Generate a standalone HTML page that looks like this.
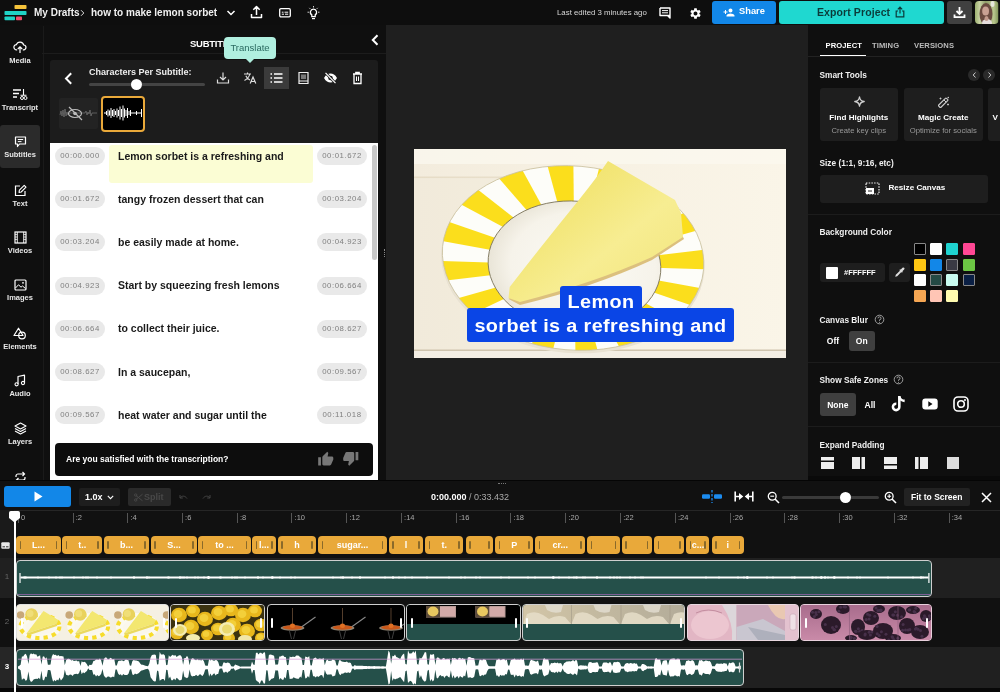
<!DOCTYPE html>
<html>
<head>
<meta charset="utf-8">
<style>
*{box-sizing:border-box;margin:0;padding:0}
html,body{width:1000px;height:692px;overflow:hidden;background:#0f0f0f;font-family:"Liberation Sans",sans-serif;color:#fff}
.abs{position:absolute}
body>div{will-change:transform}
#topbar{position:absolute;left:0;top:0;width:1000px;height:25px;background:#0e0e0e}
#sidebar{position:absolute;left:0;top:26px;width:42px;height:454px;background:#0f0f0f}
.sb{position:absolute;left:0;width:40px;text-align:center;font-size:7.5px;font-weight:700;color:#e8e8e8;letter-spacing:0}
.sb svg{display:block;margin:0 auto 2px auto}
#subpanel{position:absolute;left:42px;top:26px;width:344px;height:454px;background:#0f0f0f}
#subcard{position:absolute;left:50px;top:60px;width:328px;height:84px;background:#1c1c1c;border-radius:3px 3px 0 0}
#sublist{position:absolute;left:50px;top:143px;width:327.500px;height:337px;background:#fff;overflow:hidden}
.pill{position:absolute;width:50px;height:18px;margin-top:.5px;border-radius:9px;background:#e9e9e9;color:#808080;font-size:7.800px;text-align:center;line-height:18px;letter-spacing:.55px}
.row{position:absolute;left:68px;font-size:10.5px;font-weight:700;color:#1a1a1a;white-space:nowrap}
#canvas{position:absolute;left:386px;top:25px;width:422px;height:455px;background:#1f1f1f}
#right{position:absolute;left:808px;top:26px;width:192px;height:454px;background:#0f0f0f}
#timeline{position:absolute;left:0;top:480px;width:1000px;height:212px;background:#111}
.t1{font-size:10px;font-weight:700;color:#f0f0f0;white-space:nowrap}
.cap{font-size:18px;font-weight:700;color:#fff;text-align:center;white-space:nowrap;letter-spacing:.35px;transform:scaleX(1.10);transform-origin:50% 50%}
.tab{font-size:7.6px;font-weight:700;color:#bbb;letter-spacing:.1px}
.lbl{font-size:8.3px;font-weight:700;color:#f0f0f0;white-space:nowrap}
.card{background:#1e1e1e;border-radius:3px}
.ct{font-size:8.1px;font-weight:700;color:#fff;text-align:center;white-space:nowrap}
.cs{font-size:7.700px;color:#999;text-align:center;white-space:nowrap}
.sc{position:absolute;top:55.700px;height:18.300px;background:#e9a93a;border-radius:4px;color:#fff;font-size:9px;font-weight:700;text-align:center;line-height:18.300px;white-space:nowrap;overflow:hidden}
.sc i{position:absolute;top:5.500px;width:1.500px;height:7.500px;background:#8a6a2a;border-radius:1px}
.clip{position:absolute;border:1px solid #cfcfcf;border-radius:4px;overflow:hidden}
.clip svg{filter:blur(.45px)}
.h{position:absolute;width:2px;height:10px;background:#fff;border-radius:1px}
</style>
</head>
<body>
<div id="topbar">
<svg class="abs" style="left:4px;top:4px" width="23" height="17" viewBox="0 0 23 17"><rect x="10.5" y="1" width="12" height="4" rx=".8" fill="#f5c33b"/><rect x="0.5" y="7" width="22" height="4" rx=".8" fill="#1fd3c6"/><rect x="0.5" y="12.5" width="10.5" height="3.800" rx=".8" fill="#1fd3c6"/><rect x="12" y="12.5" width="6" height="3.800" rx=".8" fill="#f0506e"/></svg>
<div class="abs t1" style="left:34px;top:7px">My Drafts</div>
<svg class="abs" style="left:80px;top:9px" width="5" height="8" viewBox="0 0 5 8"><path d="M1 1.2 L3.8 4 L1 6.8" fill="none" stroke="#ddd" stroke-width="1"/></svg>
<div class="abs t1" style="left:91px;top:7px">how to make lemon sorbet</div>
<svg class="abs" style="left:226px;top:9px" width="10" height="8" viewBox="0 0 10 8"><path d="M1.5 2 L5 5.5 L8.5 2" fill="none" stroke="#fff" stroke-width="1.5"/></svg>
<svg class="abs" style="left:250px;top:5px" width="13" height="15" viewBox="0 0 13 15"><path d="M6.5 10 V2 M3.3 4.8 L6.5 1.6 L9.7 4.8 M1.5 9 V12.5 H11.5 V9" fill="none" stroke="#fff" stroke-width="1.5" stroke-linejoin="round"/></svg>
<svg class="abs" style="left:279px;top:8px" width="12" height="9.500" viewBox="0 0 12 9.500"><rect x=".7" y=".7" width="10.600" height="8.100" rx="1.200" fill="none" stroke="#fff" stroke-width="1.300"/><path d="M2.800 6.200 H5 M6 6.200 H9.200 M2.800 4.200 H4.500 M5.500 4.200 H9.200" stroke="#fff" stroke-width="1"/></svg>
<svg class="abs" style="left:307px;top:5.500px" width="13" height="14" viewBox="0 0 13 14"><path d="M6.500 3.200 a3.100 3.100 0 0 1 1.700 5.700 V10.600 H4.800 V8.900 A3.100 3.100 0 0 1 6.500 3.200 Z" fill="none" stroke="#fff" stroke-width="1.300"/><path d="M5 12.600 H8" stroke="#fff" stroke-width="1.200"/><path d="M6.500 .2 V1.400 M2.300 1.900 L3.100 2.700 M10.700 1.900 L9.900 2.700 M.6 6.200 H1.800 M11.200 6.200 H12.400" stroke="#fff" stroke-width="1"/></svg>
<div class="abs" style="left:557px;top:8px;font-size:7.850px;color:#d8d8d8;white-space:nowrap">Last edited 3 minutes ago</div>
<svg class="abs" style="left:659px;top:7px" width="12" height="12" viewBox="0 0 12 12"><path d="M1 1 H11 V8.5 H8.5 L11 11 V8.5 M1 1 V8.5 H8.5" fill="none" stroke="#fff" stroke-width="1.4" stroke-linejoin="round"/><path d="M3 3.6 H9 M3 5.8 H9" stroke="#fff" stroke-width="1"/></svg>
<svg class="abs" style="left:688.500px;top:6.500px" width="13" height="13" viewBox="0 0 24 24"><path fill="#fff" d="M19.14 12.94c.04-.3.06-.61.06-.94 0-.32-.02-.64-.07-.94l2.03-1.58a.49.49 0 0 0 .12-.61l-1.92-3.32a.488.488 0 0 0-.59-.22l-2.39.96c-.5-.38-1.03-.7-1.62-.94l-.36-2.54a.484.484 0 0 0-.48-.41h-3.84c-.24 0-.43.17-.47.41l-.36 2.54c-.59.24-1.13.57-1.62.94l-2.39-.96c-.22-.08-.47 0-.59.22L2.74 8.87c-.12.21-.08.47.12.61l2.03 1.58c-.05.3-.09.63-.09.94s.02.64.07.94l-2.03 1.58a.49.49 0 0 0-.12.61l1.92 3.32c.12.22.37.29.59.22l2.39-.96c.5.38 1.03.7 1.62.94l.36 2.54c.05.24.24.41.48.41h3.84c.24 0 .44-.17.47-.41l.36-2.54c.59-.24 1.13-.56 1.62-.94l2.39.96c.22.08.47 0 .59-.22l1.92-3.32c.12-.22.07-.47-.12-.61l-2.01-1.58zM12 15.6c-1.98 0-3.600-1.62-3.600-3.600s1.62-3.600 3.600-3.600 3.600 1.62 3.600 3.600-1.620 3.600-3.600 3.600z"/></svg>
<div class="abs" style="left:712px;top:1px;width:64px;height:23px;background:#1287e8;border-radius:3px"></div>
<svg class="abs" style="left:723px;top:8px" width="12" height="9" viewBox="0 0 24 18"><path fill="#fff" d="M15 9c2.21 0 4-1.790 4-4s-1.790-4-4-4-4 1.790-4 4 1.790 4 4 4zm-9-2V4H4v3H1v2h3v3h2V9h3V7H6zm9 4c-2.670 0-8 1.340-8 4v2h16v-2c0-2.660-5.330-4-8-4z"/></svg>
<div class="abs" style="left:739px;top:6px;font-size:9.300px;font-weight:700;color:#fff">Share</div>
<div class="abs" style="left:779px;top:1px;width:165px;height:23px;background:#1fd8d0;border-radius:3px"></div>
<div class="abs" style="left:817px;top:6px;font-size:10.5px;font-weight:700;color:#0b3b3a;white-space:nowrap;letter-spacing:.1px">Export Project</div>
<svg class="abs" style="left:895px;top:6px" width="10" height="12" viewBox="0 0 10 12"><path d="M5 7.5 V1.5 M2.8 3.4 L5 1.2 L7.2 3.4 M3 5 H1.2 V10.8 H8.800 V5 H7" fill="none" stroke="#0b3b3a" stroke-width="1.2"/></svg>
<div class="abs" style="left:947px;top:1px;width:24.500px;height:22.500px;background:#404040;border-radius:3px"></div>
<svg class="abs" style="left:953px;top:6px" width="13" height="13" viewBox="0 0 13 13"><path d="M6.5 1 V7.5 M3.500 5 L6.5 8 L9.5 5" fill="none" stroke="#fff" stroke-width="1.800"/><path d="M1.5 8.5 V11.2 H11.5 V8.5" fill="none" stroke="#fff" stroke-width="1.800"/></svg>
<svg class="abs" style="left:975px;top:1px" width="23.500" height="23" viewBox="0 0 23.500 23"><defs><clipPath id="av"><rect width="23.500" height="23" rx="4"/></clipPath><linearGradient id="avg" x1="0" y1="0" x2="1" y2="0"><stop offset="0" stop-color="#9db070"/><stop offset=".2" stop-color="#c9d3a4"/><stop offset=".45" stop-color="#8e9c68"/><stop offset=".8" stop-color="#b9c78e"/><stop offset="1" stop-color="#7f9258"/></linearGradient><filter id="avb"><feGaussianBlur stdDeviation=".7"/></filter></defs><g clip-path="url(#av)"><rect width="23.500" height="23" fill="url(#avg)"/><g filter="url(#avb)"><ellipse cx="11" cy="13" rx="6.500" ry="11" fill="#6b4b40"/><ellipse cx="17.500" cy="3" rx="2" ry="3" fill="#e6e6dc"/><ellipse cx="10.600" cy="10" rx="3.400" ry="4.600" fill="#c9a193"/><ellipse cx="12" cy="22" rx="5" ry="4" fill="#e6dedd"/><ellipse cx="11.500" cy="17.500" rx="2" ry="2.500" fill="#c29a8c"/></g></g></svg>
</div>
</div>
<div id="sidebar">
<div class="abs" style="left:0;top:99px;width:40px;height:43px;background:#2b2b2b;border-radius:3px"></div>
<div class="sb" style="top:14.5px"><svg width="14" height="13" viewBox="0 0 14 13"><path d="M4.200 8.800 H3.600 A2.600 2.600 0 0 1 3.400 3.600 A3.800 3.800 0 0 1 10.700 4 A2.400 2.400 0 0 1 10.400 8.800 H9.800" fill="none" stroke="#fff" stroke-width="1.2"/><path d="M7 12 V6 M4.800 8 L7 5.800 L9.200 8" fill="none" stroke="#fff" stroke-width="1.2"/></svg>Media</div>
<div class="sb" style="top:62.2px"><svg width="16" height="13" viewBox="0 0 16 13"><path d="M1 2 H9 M1 5.500 H7 M1 9 H5" stroke="#fff" stroke-width="1.300"/><path d="M11.500 1 V7 M8.500 7.200 H14.500" stroke="#fff" stroke-width="1.100"/><circle cx="10" cy="10" r="1.500" fill="none" stroke="#fff" stroke-width="1"/><circle cx="13.500" cy="10" r="1.500" fill="none" stroke="#fff" stroke-width="1"/></svg>Transcript</div>
<div class="sb" style="top:109.9px"><svg width="13" height="12" viewBox="0 0 13 12"><path d="M1.500 1 H11.500 V8 H5.500 L3.500 10.500 V8 H1.500 Z" fill="none" stroke="#fff" stroke-width="1.200" stroke-linejoin="round"/><path d="M3.800 3.500 H9.200 M3.800 5.600 H7.500" stroke="#fff" stroke-width="1"/></svg>Subtitles</div>
<div class="sb" style="top:157.6px"><svg width="13" height="13" viewBox="0 0 13 13"><path d="M6 2 H1.500 V11.500 H11 V7" fill="none" stroke="#fff" stroke-width="1.200"/><path d="M5 8.500 L5.400 6.200 L10.200 1.400 L12 3.200 L7.200 8 Z" fill="none" stroke="#fff" stroke-width="1.100" stroke-linejoin="round"/></svg>Text</div>
<div class="sb" style="top:205.3px"><svg width="13" height="13" viewBox="0 0 13 13"><rect x="1" y="1" width="11" height="11" fill="none" stroke="#fff" stroke-width="1.200"/><path d="M3.300 1 V12 M9.700 1 V12" stroke="#fff" stroke-width=".9"/><path d="M1 3.500 H3.300 M1 6 H3.300 M1 8.500 H3.300 M9.700 3.500 H12 M9.700 6 H12 M9.700 8.500 H12" stroke="#fff" stroke-width=".7"/></svg>Videos</div>
<div class="sb" style="top:253.0px"><svg width="13" height="12" viewBox="0 0 13 12"><rect x="1" y="1" width="11" height="10" rx="1" fill="none" stroke="#fff" stroke-width="1.200"/><path d="M1.500 9 L4.500 5.800 L7 8.200 L8.500 7 L11.500 9.500" fill="none" stroke="#fff" stroke-width="1"/><circle cx="9" cy="3.800" r=".9" fill="#fff"/></svg>Images</div>
<div class="sb" style="top:300.7px"><svg width="14" height="13" viewBox="0 0 14 13"><path d="M5.500 1.200 L10 8.500 H1 Z" fill="none" stroke="#fff" stroke-width="1.200" stroke-linejoin="round"/><circle cx="9" cy="8.500" r="3.300" fill="none" stroke="#fff" stroke-width="1.200"/></svg>Elements</div>
<div class="sb" style="top:348.4px"><svg width="12" height="13" viewBox="0 0 12 13"><path d="M4 10 V2.500 L10.500 1.200 V8.800" fill="none" stroke="#fff" stroke-width="1.200" stroke-linejoin="round"/><circle cx="2.600" cy="10.300" r="1.600" fill="none" stroke="#fff" stroke-width="1.100"/><circle cx="9" cy="9" r="1.600" fill="none" stroke="#fff" stroke-width="1.100"/></svg>Audio</div>
<div class="sb" style="top:396.1px"><svg width="13" height="13" viewBox="0 0 13 13"><path d="M6.500 1 L12 4 L6.500 7 L1 4 Z" fill="none" stroke="#fff" stroke-width="1.100" stroke-linejoin="round"/><path d="M1 6.500 L6.500 9.500 L12 6.500 M1 9 L6.500 12 L12 9" fill="none" stroke="#fff" stroke-width="1.100" stroke-linejoin="round"/></svg>Layers</div>
<div class="sb" style="top:445.0px"><svg width="13" height="12" viewBox="0 0 13 12"><path d="M2 6 V5 A2 2 0 0 1 4 3 H10 M8.500 1 L10.500 3 L8.500 5 M11 6 V7 A2 2 0 0 1 9 9 H3 M4.500 7 L2.500 9 L4.500 11" fill="none" stroke="#fff" stroke-width="1.200"/></svg></div>
</div>
<div id="subpanel">
<div class="abs" style="left:.5px;top:0;width:1px;height:454px;background:#1a1a1a"></div>
<div class="abs" style="left:148px;top:12px;font-size:9.500px;font-weight:700;color:#fff;letter-spacing:-.25px">SUBTITLES</div>
<svg class="abs" style="left:328.500px;top:7.500px" width="8" height="12" viewBox="0 0 8 12"><path d="M6.500 1.200 L1.800 6 L6.500 10.800" fill="none" stroke="#fff" stroke-width="2"/></svg>
<div class="abs" style="left:0;top:27px;width:344px;height:1px;background:#1c1c1c"></div>
</div>
<div id="subcard">
<svg class="abs" style="left:14px;top:12px" width="9" height="13" viewBox="0 0 9 13"><path d="M7.200 1.200 L2 6.500 L7.200 11.800" fill="none" stroke="#fff" stroke-width="2"/></svg>
<div class="abs" style="left:39px;top:7px;font-size:9px;font-weight:700;color:#eee;white-space:nowrap">Characters Per Subtitle:</div>
<div class="abs" style="left:39px;top:23px;width:116px;height:3px;border-radius:2px;background:#444"></div>
<div class="abs" style="left:81px;top:19px;width:11px;height:11px;border-radius:6px;background:#fff"></div>
<!-- icons -->
<svg class="abs" style="left:166px;top:11px" width="14" height="14" viewBox="0 0 14 14"><path d="M7 1.500 V8.500 M4 6 L7 9 L10 6" fill="none" stroke="#ddd" stroke-width="1.200"/><path d="M1.500 8.500 V12 H12.500 V8.500" fill="none" stroke="#ddd" stroke-width="1.200"/></svg>
<svg class="abs" style="left:193px;top:11px" width="14" height="14" viewBox="0 0 14 14"><path d="M1 3 H8 M4.500 1.500 V3 M6.800 3 C6.300 5.500 4.500 7.800 1.500 9.500 M2.800 4.800 C3.500 6.500 5 8 7 9" fill="none" stroke="#ddd" stroke-width="1.100"/><path d="M7.200 12.500 L10 6 L12.800 12.500 M8.200 10.500 H11.800" fill="none" stroke="#ddd" stroke-width="1.200"/></svg>
<div class="abs" style="left:214px;top:7px;width:25px;height:22px;background:#3b3b3b"></div>
<svg class="abs" style="left:220px;top:12px" width="13" height="12" viewBox="0 0 13 12"><path d="M4 2 H12.500 M4 6 H12.500 M4 10 H12.500" stroke="#fff" stroke-width="1.300"/><path d="M.5 2 H2 M.5 6 H2 M.5 10 H2" stroke="#fff" stroke-width="1.500"/></svg>
<svg class="abs" style="left:247px;top:11px" width="13" height="14" viewBox="0 0 13 14"><path d="M2 1.500 H11 V12.500 H2 Z M2 10 H11" fill="none" stroke="#eee" stroke-width="1.200"/><rect x="4" y="3.500" width="5" height="4.500" fill="#777"/></svg>
<svg class="abs" style="left:273px;top:12px" width="15" height="12" viewBox="0 0 15 12"><path d="M1 6 C3 2.500 5 1.500 7.500 1.500 S12 2.500 14 6 C12 9.500 10 10.500 7.500 10.500 S3 9.500 1 6 Z" fill="#fff"/><circle cx="7.500" cy="6" r="2.300" fill="#1c1c1c"/><path d="M2.500 .8 L12.500 11.200" stroke="#1c1c1c" stroke-width="2.600"/><path d="M2.500 .8 L12.500 11.200" stroke="#fff" stroke-width="1.200"/></svg>
<svg class="abs" style="left:302px;top:11px" width="11" height="14" viewBox="0 0 11 14"><path d="M1 3 H10 M3.800 3 V1.500 H7.200 V3 M2 3 V12.500 H9 V3" fill="none" stroke="#fff" stroke-width="1.300"/><path d="M4.500 5.500 V10 M6.500 5.500 V10" stroke="#fff" stroke-width="1"/></svg>
<!-- thumbs -->
<div class="abs" style="left:9px;top:38px;width:39px;height:31px;background:#232323;border-radius:2px"></div>
<svg class="abs" style="left:9px;top:38px" width="39" height="31" viewBox="0 0 39 31"><path d="M1 17 L2 13 L3 18 L4 12 L5 19 L6 11 L7 18 L8 14 L9 17 L10 15 H26 L27 13 L28 17 L29 14 L30 16 L31 12 L32 18 L33 15 H38" fill="none" stroke="#777" stroke-width=".7"/><ellipse cx="16" cy="15.500" rx="6.500" ry="4" fill="none" stroke="#bbb" stroke-width="1.200"/><circle cx="16" cy="15.500" r="1.800" fill="#bbb"/><path d="M10 9 L23 22" stroke="#bbb" stroke-width="1.200"/></svg>
<div class="abs" style="left:51px;top:36px;width:44px;height:36px;background:#000;border:2px solid #eaa93a;border-radius:4px"></div>
<svg class="abs" style="left:53px;top:38px" width="40" height="32" viewBox="0 0 40 32"><path d="M1 15 H3 M3.500 13 V17 M5 11.500 V18.500 M6.500 12.500 V17.500 M8 10 V20 M9.500 12 V18 M11 11 V19 M12.500 13 V17 M14 10.500 V19.500 M15.500 12 V18 M17 8.500 V21.500 M18.500 11 V19 M20 7.500 V22.500 M21.500 10.500 V19.500 M23 12 V18 M24.500 10 V20 M26 13 V17 M27.500 12 V18 M29 14 V16 M30 15 H33 M33.500 13 V17 M35 14 V16 M36 15 H38 M38.500 11 V19" stroke="#fff" stroke-width="1"/></svg>
</div>
<div id="sublist">
<div class="abs" style="left:59px;top:2px;width:203.500px;height:37.500px;background:#fbfdd4;border-radius:3px"></div>
<div class="pill" style="left:5px;top:3.5px">00:00.000</div><div class="row" style="top:6.5px">Lemon sorbet is a refreshing and</div><div class="pill" style="left:267px;top:3.5px">00:01.672</div>
<div class="pill" style="left:5px;top:46.7px">00:01.672</div><div class="row" style="top:49.7px">tangy frozen dessert that can</div><div class="pill" style="left:267px;top:46.7px">00:03.204</div>
<div class="pill" style="left:5px;top:89.9px">00:03.204</div><div class="row" style="top:92.9px">be easily made at home.</div><div class="pill" style="left:267px;top:89.9px">00:04.923</div>
<div class="pill" style="left:5px;top:133.1px">00:04.923</div><div class="row" style="top:136.1px">Start by squeezing fresh lemons</div><div class="pill" style="left:267px;top:133.1px">00:06.664</div>
<div class="pill" style="left:5px;top:176.3px">00:06.664</div><div class="row" style="top:179.3px">to collect their juice.</div><div class="pill" style="left:267px;top:176.3px">00:08.627</div>
<div class="pill" style="left:5px;top:219.5px">00:08.627</div><div class="row" style="top:222.5px">In a saucepan,</div><div class="pill" style="left:267px;top:219.5px">00:09.567</div>
<div class="pill" style="left:5px;top:262.7px">00:09.567</div><div class="row" style="top:265.7px">heat water and sugar until the</div><div class="pill" style="left:267px;top:262.7px">00:11.018</div>

<div class="abs" style="left:322px;top:2px;width:5px;height:115px;border-radius:3px;background:#c8c8c8"></div>
<div class="abs" style="left:4.500px;top:300px;width:318px;height:32.500px;background:#0d0d0d;border-radius:4px"></div>
<div class="abs" style="left:16px;top:311px;font-size:8.500px;font-weight:700;color:#fff;white-space:nowrap">Are you satisfied with the transcription?</div>
<svg class="abs" style="left:267px;top:308px" width="17.500" height="16.500" viewBox="0 0 24 24"><path fill="#777" d="M1 21h4V9H1v12zm22-11c0-1.100-.9-2-2-2h-6.310l.95-4.570.03-.32c0-.41-.17-.79-.44-1.060L14.170 1 7.590 7.590C7.220 7.950 7 8.450 7 9v10c0 1.100.9 2 2 2h9c.83 0 1.540-.5 1.840-1.220l3.020-7.050c.09-.23.140-.47.140-.73v-2z"/></svg>
<svg class="abs" style="left:292px;top:307px" width="17.500" height="16.500" viewBox="0 0 24 24"><path fill="#777" d="M15 3H6c-.83 0-1.540.5-1.840 1.220l-3.020 7.050c-.09.230-.14.470-.14.730v2c0 1.100.9 2 2 2h6.310l-.95 4.570-.03.320c0 .41.170.79.440 1.060L9.830 23l6.590-6.590c.36-.36.580-.86.580-1.410V5c0-1.100-.9-2-2-2zm4 0v12h4V3h-4z"/></svg>
</div>
<!-- tooltip -->
<div class="abs" style="left:224px;top:37px;width:52px;height:22px;background:#b0efdf;border-radius:4px;color:#2a6a60;font-size:9.5px;text-align:center;line-height:22px">Translate</div>
<div class="abs" style="left:246px;top:59px;width:0;height:0;border-left:4px solid transparent;border-right:4px solid transparent;border-top:4px solid #b0efdf"></div>
<div id="canvas">
<div class="abs" style="left:-2px;top:224px;width:2px;height:8px;border-left:1px dotted #888"></div>
<div id="video" class="abs" style="left:28px;top:123.600px;width:372px;height:209px;overflow:hidden;background:#f5efe3">
<svg class="abs" style="left:0;top:0" width="372" height="209" viewBox="0 0 372 209">
<defs>
<clipPath id="rim"><ellipse cx="159" cy="109" rx="131" ry="92"/></clipPath>
<linearGradient id="tbl" x1="0" y1="0" x2="1" y2="0"><stop offset="0" stop-color="#f3ecdd"/><stop offset=".5" stop-color="#f7f1e3"/><stop offset="1" stop-color="#faf5e8"/></linearGradient><linearGradient id="tb2" x1="0" y1="0" x2="1" y2="0"><stop offset="0" stop-color="#e6dcc6"/><stop offset=".3" stop-color="#e9e0cc"/><stop offset=".6" stop-color="#f3ecdd" stop-opacity="0"/></linearGradient>
<linearGradient id="cake" x1="0" y1="0" x2="1" y2="1"><stop offset="0" stop-color="#ecdc62"/><stop offset=".35" stop-color="#f3e678"/><stop offset=".6" stop-color="#f7ed92"/><stop offset="1" stop-color="#f2e47a"/></linearGradient>
<radialGradient id="well" cx=".55" cy=".5" r=".6"><stop offset="0" stop-color="#fbfaf5"/><stop offset=".7" stop-color="#f6f3ea"/><stop offset="1" stop-color="#e4dfd0"/></radialGradient>
<filter id="bl"><feGaussianBlur stdDeviation=".6"/></filter>
</defs>
<rect width="372" height="209" fill="url(#tbl)"/><rect width="372" height="15" fill="#fbf8ef" opacity=".75"/><rect y="27.500" width="372" height="1.600" fill="url(#tb2)"/><rect y="29" width="140" height="180" fill="#efe7d6" opacity=".35"/>
<rect x="0" y="202" width="372" height="7" fill="#f3eee4"/>
<rect x="0" y="200.500" width="372" height="1.500" fill="#cfc4ae"/>
<g filter="url(#bl)">
<g transform="rotate(5 159 110)">
<ellipse cx="159" cy="112" rx="132" ry="92" fill="#e9e2d2"/>
<ellipse cx="159" cy="109" rx="131" ry="92" fill="#fdfdf9"/>
<g clip-path="url(#rim)" fill="#fbde1c"><path d="M161.0 116.0 L80.8 -102.2 L138.8 -109.8 Z"/><path d="M161.0 116.0 L197.6 -108.7 L254.9 -99.0 Z"/><path d="M161.0 116.0 L308.7 -81.1 L356.8 -55.5 Z"/><path d="M161.0 116.0 L397.4 -23.4 L428.9 14.1 Z"/><path d="M161.0 116.0 L450.1 55.5 L460.2 99.2 Z"/><path d="M161.0 116.0 L458.8 143.6 L445.9 186.9 Z"/><path d="M161.0 116.0 L422.1 227.5 L388.3 263.8 Z"/><path d="M161.0 116.0 L345.7 294.4 L296.0 318.2 Z"/><path d="M161.0 116.0 L241.2 334.2 L183.2 341.8 Z"/><path d="M161.0 116.0 L124.4 340.7 L67.1 331.0 Z"/><path d="M161.0 116.0 L13.3 313.1 L-34.8 287.5 Z"/><path d="M161.0 116.0 L-75.4 255.4 L-106.9 217.9 Z"/><path d="M161.0 116.0 L-128.1 176.5 L-138.2 132.8 Z"/><path d="M161.0 116.0 L-136.8 88.4 L-123.9 45.1 Z"/><path d="M161.0 116.0 L-100.1 4.5 L-66.3 -31.8 Z"/><path d="M161.0 116.0 L-23.7 -62.4 L26.0 -86.2 Z"/></g>
<ellipse cx="161" cy="116" rx="86.5" ry="64" fill="url(#well)" stroke="#7d765c" stroke-width=".9"/>
<ellipse cx="159" cy="109" rx="131" ry="92" fill="none" stroke="#c9bf9c" stroke-width=".8"/>
</g>
<path d="M94.500 150 L106 156 Q180 138 238 111 L270 90 L268 86 L100 146 Z" fill="#dcc07e"/>
<path d="M194 12 L261 51 L267 64 L269 88 L238 108 Q180 134 106 153 L94.500 149 L95.700 138 Q125 100 164 52 Q180 32 187 22 Z" fill="url(#cake)"/>
</g>
</svg>
<div class="abs" style="left:145.500px;top:137px;width:82px;height:27px;background:#0a45e6;border-radius:3px"></div>
<div class="abs" style="left:52.500px;top:159.500px;width:267px;height:34px;background:#0a45e6;border-radius:3px"></div>
<div class="abs cap" id="cap1" style="left:145.500px;top:143.500px;width:82px">Lemon</div>
<div class="abs cap" id="cap2" style="left:52.500px;top:167px;width:267px">sorbet is a refreshing and</div>
</div>
</div>
<div id="right">
<div class="abs tab" style="left:17.500px;top:15px;color:#fff">PROJECT</div>
<div class="abs tab" style="left:64px;top:15px">TIMING</div>
<div class="abs tab" style="left:106px;top:15px">VERSIONS</div>
<div class="abs" style="left:11.500px;top:28.500px;width:46.500px;height:2.500px;background:#fff"></div>
<div class="abs" style="left:0;top:30px;width:192px;height:1px;background:#222"></div>
<div class="abs lbl" style="left:11.500px;top:44px">Smart Tools</div>
<div class="abs" style="left:160px;top:42.500px;width:12px;height:12px;border-radius:6px;background:#2a2a2a"></div>
<div class="abs" style="left:175px;top:42.500px;width:12px;height:12px;border-radius:6px;background:#2a2a2a"></div>
<svg class="abs" style="left:163.500px;top:45.500px" width="5" height="6" viewBox="0 0 5 6"><path d="M3.500 .5 L1.200 3 L3.500 5.500" fill="none" stroke="#ccc" stroke-width="1"/></svg>
<svg class="abs" style="left:178.500px;top:45.500px" width="5" height="6" viewBox="0 0 5 6"><path d="M1.500 .5 L3.800 3 L1.500 5.500" fill="none" stroke="#ccc" stroke-width="1"/></svg>
<div class="abs card" style="left:11.500px;top:62px;width:78.500px;height:53px"></div>
<div class="abs card" style="left:96px;top:62px;width:78.500px;height:53px"></div>
<div class="abs card" style="left:180px;top:62px;width:12px;height:53px;border-radius:3px 0 0 3px"></div>
<svg class="abs" style="left:45.500px;top:70px" width="11" height="11" viewBox="0 0 11 11"><path d="M5.500 .8 C5.800 3.800 7.200 5.200 10.200 5.500 C7.200 5.800 5.800 7.200 5.500 10.200 C5.200 7.200 3.800 5.800 .8 5.500 C3.800 5.200 5.200 3.800 5.500 .8 Z" fill="none" stroke="#cfcfcf" stroke-width="1.300" stroke-linejoin="round"/></svg>
<svg class="abs" style="left:130px;top:69.500px" width="12" height="12" viewBox="0 0 12 12"><rect x="-1.600" y="-5.500" width="3.200" height="11" rx=".8" transform="translate(5.200 6.800) rotate(45)" fill="none" stroke="#cfcfcf" stroke-width="1.100"/><path d="M5.800 3.800 L8.200 6.200" stroke="#cfcfcf" stroke-width="1"/><path d="M2.500 1.500 V3.500 M1.500 2.500 H3.500 M10 7.500 V9.500 M9 8.500 H11 M10.300 .8 V2.200 M9.600 1.500 H11" stroke="#cfcfcf" stroke-width=".8"/></svg>
<div class="abs ct" style="left:11.500px;top:87px;width:78.500px">Find Highlights</div>
<div class="abs cs" style="left:11.500px;top:99.500px;width:78.500px">Create key clips</div>
<div class="abs ct" style="left:96px;top:87px;width:78.500px">Magic Create</div>
<div class="abs cs" style="left:96px;top:99.500px;width:78.500px">Optimize for socials</div>
<div class="abs ct" style="left:184.500px;top:87px">V</div>
<div class="abs lbl" style="left:11.500px;top:131.500px">Size (1:1, 9:16, etc)</div>
<div class="abs card" style="left:11.500px;top:149px;width:168.500px;height:28px"></div>
<svg class="abs" style="left:56.500px;top:156px" width="15" height="13" viewBox="0 0 15 13"><rect x="1" y="1" width="13" height="11" fill="none" stroke="#eee" stroke-width="1.200" stroke-dasharray="1.500 1.200"/><rect x="1" y="6" width="8" height="6" fill="#fff"/><path d="M3 9 H7" stroke="#222" stroke-width="1"/></svg>
<div class="abs ct" style="left:80.500px;top:157px;text-align:left">Resize Canvas</div>
<div class="abs" style="left:0;top:188px;width:192px;height:1px;background:#1c1c1c"></div>
<div class="abs lbl" style="left:11.500px;top:201px">Background Color</div>
<div class="abs card" style="left:11.500px;top:236.500px;width:65.500px;height:19.500px"></div>
<div class="abs" style="left:17.500px;top:240.500px;width:12px;height:12px;background:#fff;border-radius:1px"></div>
<div class="abs ct" style="left:36px;top:241.500px;text-align:left;font-size:7.500px">#FFFFFF</div>
<div class="abs card" style="left:81px;top:236.500px;width:20.500px;height:19.500px"></div>
<svg class="abs" style="left:86px;top:241px" width="11" height="11" viewBox="0 0 11 11"><path d="M1.200 9.800 L1.800 7.800 L6.200 3.400 L7.600 4.800 L3.200 9.200 Z" fill="#ddd"/><path d="M5.800 2.600 L8.400 5.200" stroke="#ddd" stroke-width="1.300"/><path d="M7 4 L9.300 1.700" stroke="#ddd" stroke-width="2.400" stroke-linecap="round"/></svg>
<div class="abs" style="left:105.5px;top:217.0px;width:12px;height:12px;background:#000000;border:1px solid #888;border-radius:1px"></div><div class="abs" style="left:121.8px;top:217.0px;width:12px;height:12px;background:#ffffff;border:1px solid #ffffff;border-radius:1px"></div><div class="abs" style="left:138.2px;top:217.0px;width:12px;height:12px;background:#1fd3d0;border:1px solid #1fd3d0;border-radius:1px"></div><div class="abs" style="left:154.6px;top:217.0px;width:12px;height:12px;background:#ff4794;border:1px solid #ff4794;border-radius:1px"></div><div class="abs" style="left:105.5px;top:232.7px;width:12px;height:12px;background:#ffc713;border:1px solid #ffc713;border-radius:1px"></div><div class="abs" style="left:121.8px;top:232.7px;width:12px;height:12px;background:#1287e8;border:1px solid #1287e8;border-radius:1px"></div><div class="abs" style="left:138.2px;top:232.7px;width:12px;height:12px;background:#3a3a44;border:1px solid #888;border-radius:1px"></div><div class="abs" style="left:154.6px;top:232.7px;width:12px;height:12px;background:#6cc644;border:1px solid #6cc644;border-radius:1px"></div><div class="abs" style="left:105.5px;top:248.4px;width:12px;height:12px;background:#ffffff;border:1px solid #ffffff;border-radius:1px"></div><div class="abs" style="left:121.8px;top:248.4px;width:12px;height:12px;background:#244a45;border:1px solid #888;border-radius:1px"></div><div class="abs" style="left:138.2px;top:248.4px;width:12px;height:12px;background:#c9fbf0;border:1px solid #c9fbf0;border-radius:1px"></div><div class="abs" style="left:154.6px;top:248.4px;width:12px;height:12px;background:#0a1f44;border:1px solid #888;border-radius:1px"></div><div class="abs" style="left:105.5px;top:264.1px;width:12px;height:12px;background:#f5a653;border:1px solid #f5a653;border-radius:1px"></div><div class="abs" style="left:121.8px;top:264.1px;width:12px;height:12px;background:#ffc5b5;border:1px solid #ffc5b5;border-radius:1px"></div><div class="abs" style="left:138.2px;top:264.1px;width:12px;height:12px;background:#fffbb0;border:1px solid #fffbb0;border-radius:1px"></div>
<div class="abs lbl" style="left:11.500px;top:288.500px">Canvas Blur</div>
<svg class="abs" style="left:66px;top:288px" width="11" height="11" viewBox="0 0 11 11"><circle cx="5.500" cy="5.500" r="4.300" fill="none" stroke="#aaa" stroke-width=".9"/><path d="M4 4.300 A1.500 1.500 0 1 1 5.500 5.800 V6.800" fill="none" stroke="#aaa" stroke-width=".9"/><circle cx="5.500" cy="8.200" r=".55" fill="#aaa"/></svg>
<div class="abs ct" style="left:17px;top:310px;width:16px;font-size:8.500px">Off</div>
<div class="abs" style="left:40.500px;top:304.500px;width:26.500px;height:20px;background:#3f3f3f;border-radius:3px"></div>
<div class="abs ct" style="left:40.500px;top:310px;width:26.500px;font-size:8.500px">On</div>
<div class="abs" style="left:0;top:335.500px;width:192px;height:1px;background:#1c1c1c"></div>
<div class="abs lbl" style="left:11.500px;top:349px">Show Safe Zones</div>
<svg class="abs" style="left:85px;top:348px" width="11" height="11" viewBox="0 0 11 11"><circle cx="5.500" cy="5.500" r="4.300" fill="none" stroke="#aaa" stroke-width=".9"/><path d="M4 4.300 A1.500 1.500 0 1 1 5.500 5.800 V6.800" fill="none" stroke="#aaa" stroke-width=".9"/><circle cx="5.500" cy="8.200" r=".55" fill="#aaa"/></svg>
<div class="abs" style="left:11.500px;top:366.500px;width:36.500px;height:23px;background:#3f3f3f;border-radius:3px"></div>
<div class="abs ct" style="left:11.500px;top:373.500px;width:36.500px;font-size:8.500px">None</div>
<div class="abs ct" style="left:53px;top:373.500px;width:18px;font-size:8.500px">All</div>
<svg class="abs" style="left:83px;top:368.500px" width="16" height="18.100" viewBox="0 0 15 17"><path d="M7.800 1 V11.200 A3 3 0 1 1 5 8.200" fill="none" stroke="#fff" stroke-width="2.400"/><path d="M7.800 1.500 C8.200 4 10 5.300 12.800 5.500" fill="none" stroke="#fff" stroke-width="2.400"/></svg>
<svg class="abs" style="left:114px;top:372px" width="16" height="12" viewBox="0 0 16 12"><rect x=".3" y=".5" width="15.400" height="11" rx="3" fill="#fff"/><path d="M6.300 3.300 L10.500 6 L6.300 8.700 Z" fill="#0f0f0f"/></svg>
<svg class="abs" style="left:145px;top:370px" width="16" height="16" viewBox="0 0 16 16"><rect x="1" y="1" width="14" height="14" rx="4" fill="none" stroke="#fff" stroke-width="1.600"/><circle cx="8" cy="8" r="3.300" fill="none" stroke="#fff" stroke-width="1.600"/><circle cx="12" cy="4" r="1" fill="#fff"/></svg>
<div class="abs" style="left:0;top:399.500px;width:192px;height:1px;background:#1c1c1c"></div>
<div class="abs lbl" style="left:11.500px;top:414px">Expand Padding</div>
<svg class="abs" style="left:12.500px;top:431px" width="13" height="12" viewBox="0 0 13 12"><rect width="13" height="3.500" fill="#eee"/><rect y="5" width="13" height="7" fill="#eee"/></svg>
<svg class="abs" style="left:44px;top:431px" width="13" height="12" viewBox="0 0 13 12"><rect width="8" height="12" fill="#eee"/><rect x="9.500" width="3.500" height="12" fill="#eee"/></svg>
<svg class="abs" style="left:75.500px;top:431px" width="13" height="12" viewBox="0 0 13 12"><rect width="13" height="7" fill="#eee"/><rect y="8.500" width="13" height="3.500" fill="#eee"/></svg>
<svg class="abs" style="left:106.500px;top:431px" width="13" height="12" viewBox="0 0 13 12"><rect width="3.500" height="12" fill="#eee"/><rect x="5" width="8" height="12" fill="#eee"/></svg>
<svg class="abs" style="left:138.500px;top:431px" width="12" height="12" viewBox="0 0 12 12"><rect width="12" height="12" fill="#ddd"/></svg>
<div class="abs" style="left:0;top:450px;width:192px;height:4px;background:#0a0a0a"></div>
</div>
<div id="timeline">
<!--TL1-->
<div class="abs" style="left:0;top:0;width:1000px;height:1px;background:#050505"></div>
<div class="abs" style="left:497.500px;top:2.500px;width:8px;height:1px;border-top:1px dotted #777"></div>
<div class="abs" style="left:4px;top:6px;width:67px;height:21px;background:#1287e8;border-radius:3px"></div>
<svg class="abs" style="left:34px;top:11px" width="9" height="11" viewBox="0 0 9 11"><path d="M.5 .5 L8.500 5.500 L.5 10.500 Z" fill="#fff"/></svg>
<div class="abs" style="left:79px;top:8px;width:41px;height:18px;background:#1e1e1e;border-radius:2px"></div>
<div class="abs" style="left:85px;top:12px;font-size:9px;font-weight:700;color:#fff">1.0x</div>
<svg class="abs" style="left:107px;top:14.500px" width="7" height="5" viewBox="0 0 7 5"><path d="M.8 .8 L3.500 3.600 L6.200 .8" fill="none" stroke="#fff" stroke-width="1.100"/></svg>
<div class="abs" style="left:128px;top:8px;width:42.500px;height:18px;background:#2a2a2a;border-radius:2px"></div>
<svg class="abs" style="left:133.500px;top:12.500px" width="9" height="9" viewBox="0 0 9 9"><path d="M1.800 2.400 L8.500 7.800 M1.800 6.600 L8.500 1.200" stroke="#484848" stroke-width="1"/><circle cx="1.700" cy="2" r="1.200" fill="none" stroke="#484848" stroke-width=".9"/><circle cx="1.700" cy="7" r="1.200" fill="none" stroke="#484848" stroke-width=".9"/></svg>
<div class="abs" style="left:144px;top:12px;font-size:9px;font-weight:700;color:#484848;white-space:nowrap">Split</div>
<svg class="abs" style="left:179px;top:14px" width="9" height="6" viewBox="0 0 9 6"><path d="M1 1 V4 H3.800 M1.200 3.800 C3 1.500 6 1.500 8 4.500" fill="none" stroke="#444" stroke-width="1"/></svg>
<svg class="abs" style="left:202px;top:14px" width="9" height="6" viewBox="0 0 9 6"><path d="M8 1 V4 H5.200 M7.800 3.800 C6 1.500 3 1.500 1 4.500" fill="none" stroke="#444" stroke-width="1"/></svg>
<div class="abs" style="left:431px;top:12px;font-size:9px;color:#aaa;white-space:nowrap"><b style="color:#fff">0:00.000</b> / 0:33.432</div>
<svg class="abs" style="left:702px;top:10px" width="20" height="13" viewBox="0 0 20 13"><rect x="0" y="4.300" width="8" height="4.400" rx="1.200" fill="#1c8cf0"/><rect x="12" y="4.300" width="8" height="4.400" rx="1.200" fill="#1c8cf0"/><path d="M10 0 V13" stroke="#1c8cf0" stroke-width="1.300" stroke-dasharray="2.500 1.500"/></svg>
<svg class="abs" style="left:734px;top:11px" width="20" height="11" viewBox="0 0 20 11"><path d="M1.200 .5 V10.500 M18.800 .5 V10.500" stroke="#fff" stroke-width="1.600"/><path d="M2 5.500 H6 M18 5.500 H14" stroke="#fff" stroke-width="1.400"/><path d="M5 2 L9.300 5.500 L5 9 Z M15 2 L10.700 5.500 L15 9 Z" fill="#fff"/></svg>
<svg class="abs" style="left:767px;top:10.500px" width="13" height="13" viewBox="0 0 13 13"><circle cx="5.200" cy="5.200" r="3.900" fill="none" stroke="#fff" stroke-width="1.300"/><path d="M8 8 L12 12" stroke="#fff" stroke-width="1.600"/><path d="M3.300 5.200 H7.100" stroke="#fff" stroke-width="1.100"/></svg>
<div class="abs" style="left:782px;top:15.500px;width:97px;height:3px;border-radius:2px;background:#3a3a3a"></div>
<div class="abs" style="left:839.500px;top:11.500px;width:11px;height:11px;border-radius:6px;background:#fff"></div>
<svg class="abs" style="left:884px;top:10.500px" width="13" height="13" viewBox="0 0 13 13"><circle cx="5.200" cy="5.200" r="3.900" fill="none" stroke="#fff" stroke-width="1.300"/><path d="M8 8 L12 12" stroke="#fff" stroke-width="1.600"/><path d="M3.300 5.200 H7.100 M5.200 3.300 V7.100" stroke="#fff" stroke-width="1.100"/></svg>
<div class="abs" style="left:904px;top:8px;width:65.500px;height:18px;background:#222;border-radius:2px;font-size:8.500px;color:#fff;text-align:center;line-height:18px;font-weight:700;white-space:nowrap">Fit to Screen</div>
<svg class="abs" style="left:981px;top:11.500px" width="11" height="11" viewBox="0 0 11 11"><path d="M1 1 L10 10 M10 1 L1 10" stroke="#fff" stroke-width="1.500"/></svg>
<div class="abs" style="left:0;top:30px;width:1000px;height:1px;background:#262626"></div>
<div class="abs" style="left:17.7px;top:33px;width:1px;height:10px;background:#555"></div>
<div class="abs" style="left:20.9px;top:32.500px;font-size:7.500px;color:#aaa">0</div>
<div class="abs" style="left:72.5px;top:33px;width:1px;height:10px;background:#555"></div>
<div class="abs" style="left:75.7px;top:32.500px;font-size:7.500px;color:#aaa">:2</div>
<div class="abs" style="left:127.2px;top:33px;width:1px;height:10px;background:#555"></div>
<div class="abs" style="left:130.4px;top:32.500px;font-size:7.500px;color:#aaa">:4</div>
<div class="abs" style="left:181.9px;top:33px;width:1px;height:10px;background:#555"></div>
<div class="abs" style="left:185.1px;top:32.500px;font-size:7.500px;color:#aaa">:6</div>
<div class="abs" style="left:236.7px;top:33px;width:1px;height:10px;background:#555"></div>
<div class="abs" style="left:239.9px;top:32.500px;font-size:7.500px;color:#aaa">:8</div>
<div class="abs" style="left:291.4px;top:33px;width:1px;height:10px;background:#555"></div>
<div class="abs" style="left:294.6px;top:32.500px;font-size:7.500px;color:#aaa">:10</div>
<div class="abs" style="left:346.2px;top:33px;width:1px;height:10px;background:#555"></div>
<div class="abs" style="left:349.4px;top:32.500px;font-size:7.500px;color:#aaa">:12</div>
<div class="abs" style="left:400.9px;top:33px;width:1px;height:10px;background:#555"></div>
<div class="abs" style="left:404.1px;top:32.500px;font-size:7.500px;color:#aaa">:14</div>
<div class="abs" style="left:455.7px;top:33px;width:1px;height:10px;background:#555"></div>
<div class="abs" style="left:458.9px;top:32.500px;font-size:7.500px;color:#aaa">:16</div>
<div class="abs" style="left:510.4px;top:33px;width:1px;height:10px;background:#555"></div>
<div class="abs" style="left:513.6px;top:32.500px;font-size:7.500px;color:#aaa">:18</div>
<div class="abs" style="left:565.2px;top:33px;width:1px;height:10px;background:#555"></div>
<div class="abs" style="left:568.4px;top:32.500px;font-size:7.500px;color:#aaa">:20</div>
<div class="abs" style="left:620.0px;top:33px;width:1px;height:10px;background:#555"></div>
<div class="abs" style="left:623.2px;top:32.500px;font-size:7.500px;color:#aaa">:22</div>
<div class="abs" style="left:674.7px;top:33px;width:1px;height:10px;background:#555"></div>
<div class="abs" style="left:677.9px;top:32.500px;font-size:7.500px;color:#aaa">:24</div>
<div class="abs" style="left:729.5px;top:33px;width:1px;height:10px;background:#555"></div>
<div class="abs" style="left:732.7px;top:32.500px;font-size:7.500px;color:#aaa">:26</div>
<div class="abs" style="left:784.2px;top:33px;width:1px;height:10px;background:#555"></div>
<div class="abs" style="left:787.4px;top:32.500px;font-size:7.500px;color:#aaa">:28</div>
<div class="abs" style="left:839.0px;top:33px;width:1px;height:10px;background:#555"></div>
<div class="abs" style="left:842.2px;top:32.500px;font-size:7.500px;color:#aaa">:30</div>
<div class="abs" style="left:893.7px;top:33px;width:1px;height:10px;background:#555"></div>
<div class="abs" style="left:896.9px;top:32.500px;font-size:7.500px;color:#aaa">:32</div>
<div class="abs" style="left:948.5px;top:33px;width:1px;height:10px;background:#555"></div>
<div class="abs" style="left:951.7px;top:32.500px;font-size:7.500px;color:#aaa">:34</div>
<div class="abs" style="left:0;top:30px;width:13.500px;height:48px;background:#1a1a1a"></div>
<div class="abs" style="left:0;top:78px;width:1000px;height:40px;background:#202020"></div>
<div class="abs" style="left:0;top:167px;width:1000px;height:41px;background:#202020"></div>
<div class="abs" style="left:0;top:167px;width:14.500px;height:41px;background:#262626"></div>
<div class="abs" style="left:0;top:208px;width:1000px;height:4px;background:#080808"></div>
<div class="abs" style="left:0;top:92px;width:14px;text-align:center;font-size:8px;color:#666;font-weight:400">1</div>
<div class="abs" style="left:0;top:137px;width:14px;text-align:center;font-size:8px;color:#666;font-weight:400">2</div>
<div class="abs" style="left:0;top:182px;width:14px;text-align:center;font-size:8px;color:#fff;font-weight:700">3</div>
<svg class="abs" style="left:1px;top:62px" width="9" height="7" viewBox="0 0 9 7"><rect x=".3" y=".3" width="8.400" height="6.400" rx="1" fill="#e8e8e8"/><path d="M1.500 4.800 H4 M5 4.800 H7.500" stroke="#222" stroke-width=".9"/></svg>
<div class="sc" style="left:16.3px;width:44.3px">L...<i style="left:3.500px"></i><i style="right:3.500px"></i></div>
<div class="sc" style="left:62.0px;width:40.3px">t..<i style="left:3.500px"></i><i style="right:3.500px"></i></div>
<div class="sc" style="left:103.8px;width:45.4px">b...<i style="left:3.500px"></i><i style="right:3.500px"></i></div>
<div class="sc" style="left:150.7px;width:46.4px">S...<i style="left:3.500px"></i><i style="right:3.500px"></i></div>
<div class="sc" style="left:198.3px;width:52.3px">to ...<i style="left:3.500px"></i><i style="right:3.500px"></i></div>
<div class="sc" style="left:252.0px;width:24.2px">l...<i style="left:3.500px"></i><i style="right:3.500px"></i></div>
<div class="sc" style="left:277.8px;width:38.5px">h<i style="left:3.500px"></i><i style="right:3.500px"></i></div>
<div class="sc" style="left:318.3px;width:68.3px">sugar...<i style="left:3.500px"></i><i style="right:3.500px"></i></div>
<div class="sc" style="left:388.6px;width:34.7px">l<i style="left:3.500px"></i><i style="right:3.500px"></i></div>
<div class="sc" style="left:425.0px;width:38.4px">t.<i style="left:3.500px"></i><i style="right:3.500px"></i></div>
<div class="sc" style="left:465.5px;width:27.8px"><i style="left:3.500px"></i><i style="right:3.500px"></i></div>
<div class="sc" style="left:495.4px;width:37.8px">P<i style="left:3.500px"></i><i style="right:3.500px"></i></div>
<div class="sc" style="left:535.4px;width:49.9px">cr...<i style="left:3.500px"></i><i style="right:3.500px"></i></div>
<div class="sc" style="left:587.4px;width:32.4px"><i style="left:3.500px"></i><i style="right:3.500px"></i></div>
<div class="sc" style="left:621.9px;width:30.1px"><i style="left:3.500px"></i><i style="right:3.500px"></i></div>
<div class="sc" style="left:654.1px;width:30.0px"><i style="left:3.500px"></i><i style="right:3.500px"></i></div>
<div class="sc" style="left:686.3px;width:23.2px">c...<i style="left:3.500px"></i><i style="right:3.500px"></i></div>
<div class="sc" style="left:711.7px;width:32.3px">i<i style="left:3.500px"></i><i style="right:3.500px"></i></div>
<div class="clip" style="left:16.200px;top:79.500px;width:916.2px;height:37px;background:#25504a"></div>
<svg class="abs" style="left:0;top:0" width="1000" height="212" viewBox="0 0 1000 212"><path d="M21.0 96.55 V98.45 M22.0 96.55 V98.45 M23.0 96.55 V98.45 M24.0 96.20 V98.80 M25.0 96.20 V98.80 M26.0 96.20 V98.80 M27.0 96.55 V98.45 M28.0 96.55 V98.45 M29.0 96.55 V98.45 M30.0 96.55 V98.45 M31.0 96.55 V98.45 M32.0 96.55 V98.45 M33.0 96.55 V98.45 M34.0 96.55 V98.45 M35.0 96.55 V98.45 M36.0 96.55 V98.45 M37.0 96.55 V98.45 M38.0 96.20 V98.80 M39.0 96.55 V98.45 M40.0 96.55 V98.45 M41.0 96.55 V98.45 M42.0 96.55 V98.45 M43.0 96.55 V98.45 M44.0 96.55 V98.45 M45.0 96.55 V98.45 M46.0 96.55 V98.45 M47.0 96.55 V98.45 M48.0 96.55 V98.45 M49.0 96.20 V98.80 M50.0 96.55 V98.45 M51.0 96.55 V98.45 M52.0 96.55 V98.45 M53.0 96.55 V98.45 M54.0 96.55 V98.45 M55.0 96.55 V98.45 M56.0 96.20 V98.80 M57.0 96.55 V98.45 M58.0 96.55 V98.45 M59.0 96.55 V98.45 M60.0 96.20 V98.80 M61.0 96.55 V98.45 M62.0 96.20 V98.80 M63.0 96.55 V98.45 M64.0 96.55 V98.45 M65.0 96.55 V98.45 M66.0 96.55 V98.45 M67.0 96.55 V98.45 M68.0 96.55 V98.45 M69.0 96.55 V98.45 M70.0 96.55 V98.45 M71.0 96.55 V98.45 M72.0 96.55 V98.45 M73.0 96.55 V98.45 M74.0 96.20 V98.80 M75.0 96.55 V98.45 M76.0 96.55 V98.45 M77.0 96.55 V98.45 M78.0 96.55 V98.45 M79.0 96.55 V98.45 M80.0 96.55 V98.45 M81.0 96.55 V98.45 M82.0 96.55 V98.45 M83.0 96.20 V98.80 M84.0 96.55 V98.45 M85.0 96.55 V98.45 M86.0 96.20 V98.80 M87.0 96.55 V98.45 M88.0 96.20 V98.80 M89.0 96.55 V98.45 M90.0 96.55 V98.45 M91.0 96.55 V98.45 M92.0 96.55 V98.45 M93.0 96.55 V98.45 M94.0 96.55 V98.45 M95.0 96.55 V98.45 M96.0 96.55 V98.45 M97.0 96.20 V98.80 M98.0 96.55 V98.45 M99.0 96.55 V98.45 M100.0 96.55 V98.45 M101.0 96.55 V98.45 M102.0 96.55 V98.45 M103.0 96.55 V98.45 M104.0 96.55 V98.45 M105.0 96.55 V98.45 M106.0 96.55 V98.45 M107.0 96.55 V98.45 M108.0 96.55 V98.45 M109.0 96.55 V98.45 M110.0 96.55 V98.45 M111.0 96.20 V98.80 M112.0 96.55 V98.45 M113.0 96.55 V98.45 M114.0 96.55 V98.45 M115.0 96.55 V98.45 M116.0 96.55 V98.45 M117.0 96.55 V98.45 M118.0 96.55 V98.45 M119.0 96.55 V98.45 M120.0 96.55 V98.45 M121.0 96.55 V98.45 M122.0 96.55 V98.45 M123.0 96.55 V98.45 M124.0 96.55 V98.45 M125.0 96.55 V98.45 M126.0 96.55 V98.45 M127.0 96.55 V98.45 M128.0 96.55 V98.45 M129.0 96.55 V98.45 M130.0 96.55 V98.45 M131.0 96.55 V98.45 M132.0 96.55 V98.45 M133.0 96.55 V98.45 M134.0 96.05 V98.95 M135.0 96.55 V98.45 M136.0 96.55 V98.45 M137.0 96.55 V98.45 M138.0 96.55 V98.45 M139.0 96.55 V98.45 M140.0 96.55 V98.45 M141.0 96.55 V98.45 M142.0 96.55 V98.45 M143.0 96.55 V98.45 M144.0 96.55 V98.45 M145.0 96.55 V98.45 M146.0 96.55 V98.45 M147.0 96.05 V98.95 M148.0 96.55 V98.45 M149.0 96.20 V98.80 M150.0 96.55 V98.45 M151.0 96.55 V98.45 M152.0 96.55 V98.45 M153.0 96.55 V98.45 M154.0 96.55 V98.45 M155.0 96.55 V98.45 M156.0 96.55 V98.45 M157.0 96.55 V98.45 M158.0 96.55 V98.45 M159.0 96.55 V98.45 M160.0 96.55 V98.45 M161.0 96.55 V98.45 M162.0 96.55 V98.45 M163.0 96.55 V98.45 M164.0 96.55 V98.45 M165.0 96.55 V98.45 M166.0 96.55 V98.45 M167.0 96.55 V98.45 M168.0 96.20 V98.80 M169.0 96.20 V98.80 M170.0 96.55 V98.45 M171.0 96.55 V98.45 M172.0 96.55 V98.45 M173.0 96.55 V98.45 M174.0 96.55 V98.45 M175.0 96.55 V98.45 M176.0 96.55 V98.45 M177.0 96.55 V98.45 M178.0 96.55 V98.45 M179.0 96.55 V98.45 M180.0 96.05 V98.95 M181.0 96.55 V98.45 M182.0 96.20 V98.80 M183.0 96.55 V98.45 M184.0 96.20 V98.80 M185.0 96.55 V98.45 M186.0 96.55 V98.45 M187.0 96.20 V98.80 M188.0 96.55 V98.45 M189.0 96.55 V98.45 M190.0 96.55 V98.45 M191.0 96.55 V98.45 M192.0 96.55 V98.45 M193.0 96.55 V98.45 M194.0 96.55 V98.45 M195.0 96.20 V98.80 M196.0 96.55 V98.45 M197.0 96.55 V98.45 M198.0 96.20 V98.80 M199.0 96.55 V98.45 M200.0 96.55 V98.45 M201.0 96.55 V98.45 M202.0 96.55 V98.45 M203.0 96.55 V98.45 M204.0 96.20 V98.80 M205.0 96.55 V98.45 M206.0 96.55 V98.45 M207.0 96.55 V98.45 M208.0 96.05 V98.95 M209.0 96.05 V98.95 M210.0 96.55 V98.45 M211.0 96.55 V98.45 M212.0 96.55 V98.45 M213.0 96.55 V98.45 M214.0 96.55 V98.45 M215.0 96.55 V98.45 M216.0 96.55 V98.45 M217.0 96.55 V98.45 M218.0 96.55 V98.45 M219.0 96.55 V98.45 M220.0 96.20 V98.80 M221.0 96.20 V98.80 M222.0 96.55 V98.45 M223.0 96.55 V98.45 M224.0 96.55 V98.45 M225.0 96.55 V98.45 M226.0 96.55 V98.45 M227.0 96.55 V98.45 M228.0 96.55 V98.45 M229.0 96.55 V98.45 M230.0 96.55 V98.45 M231.0 96.55 V98.45 M232.0 96.20 V98.80 M233.0 96.55 V98.45 M234.0 96.55 V98.45 M235.0 96.20 V98.80 M236.0 96.55 V98.45 M237.0 96.20 V98.80 M238.0 96.55 V98.45 M239.0 96.55 V98.45 M240.0 96.55 V98.45 M241.0 96.55 V98.45 M242.0 96.55 V98.45 M243.0 96.55 V98.45 M244.0 96.55 V98.45 M245.0 96.20 V98.80 M246.0 96.55 V98.45 M247.0 96.55 V98.45 M248.0 96.55 V98.45 M249.0 96.55 V98.45 M250.0 96.55 V98.45 M251.0 96.55 V98.45 M252.0 96.55 V98.45 M253.0 96.55 V98.45 M254.0 96.55 V98.45 M255.0 96.55 V98.45 M256.0 96.55 V98.45 M257.0 96.55 V98.45 M258.0 96.05 V98.95 M259.0 96.55 V98.45 M260.0 96.55 V98.45 M261.0 96.55 V98.45 M262.0 96.55 V98.45 M263.0 96.20 V98.80 M264.0 96.55 V98.45 M265.0 96.55 V98.45 M266.0 96.55 V98.45 M267.0 96.55 V98.45 M268.0 96.55 V98.45 M269.0 96.55 V98.45 M270.0 96.55 V98.45 M271.0 96.55 V98.45 M272.0 96.05 V98.95 M273.0 96.20 V98.80 M274.0 96.55 V98.45 M275.0 96.55 V98.45 M276.0 96.55 V98.45 M277.0 96.55 V98.45 M278.0 96.55 V98.45 M279.0 96.55 V98.45 M280.0 96.20 V98.80 M281.0 96.55 V98.45 M282.0 96.55 V98.45 M283.0 96.55 V98.45 M284.0 96.55 V98.45 M285.0 96.55 V98.45 M286.0 96.55 V98.45 M287.0 96.55 V98.45 M288.0 96.55 V98.45 M289.0 96.55 V98.45 M290.0 96.55 V98.45 M291.0 96.20 V98.80 M292.0 96.55 V98.45 M293.0 96.55 V98.45 M294.0 96.55 V98.45 M295.0 96.20 V98.80 M296.0 96.55 V98.45 M297.0 96.55 V98.45 M298.0 96.55 V98.45 M299.0 96.55 V98.45 M300.0 96.55 V98.45 M301.0 96.55 V98.45 M302.0 96.55 V98.45 M303.0 96.55 V98.45 M304.0 96.55 V98.45 M305.0 96.55 V98.45 M306.0 96.55 V98.45 M307.0 96.55 V98.45 M308.0 96.55 V98.45 M309.0 96.55 V98.45 M310.0 96.55 V98.45 M311.0 96.55 V98.45 M312.0 96.55 V98.45 M313.0 96.55 V98.45 M314.0 96.55 V98.45 M315.0 96.55 V98.45 M316.0 96.55 V98.45 M317.0 96.55 V98.45 M318.0 96.55 V98.45 M319.0 96.55 V98.45 M320.0 96.55 V98.45 M321.0 96.55 V98.45 M322.0 96.55 V98.45 M323.0 96.55 V98.45 M324.0 96.55 V98.45 M325.0 96.55 V98.45 M326.0 96.55 V98.45 M327.0 96.55 V98.45 M328.0 96.55 V98.45 M329.0 96.55 V98.45 M330.0 96.55 V98.45 M331.0 96.55 V98.45 M332.0 96.55 V98.45 M333.0 96.20 V98.80 M334.0 96.55 V98.45 M335.0 96.55 V98.45 M336.0 96.55 V98.45 M337.0 96.55 V98.45 M338.0 96.55 V98.45 M339.0 96.55 V98.45 M340.0 96.55 V98.45 M341.0 96.20 V98.80 M342.0 96.55 V98.45 M343.0 96.05 V98.95 M344.0 96.55 V98.45 M345.0 96.55 V98.45 M346.0 96.55 V98.45 M347.0 96.55 V98.45 M348.0 96.55 V98.45 M349.0 96.55 V98.45 M350.0 96.55 V98.45 M351.0 96.55 V98.45 M352.0 96.20 V98.80 M353.0 96.55 V98.45 M354.0 96.55 V98.45 M355.0 96.55 V98.45 M356.0 96.55 V98.45 M357.0 96.55 V98.45 M358.0 96.55 V98.45 M359.0 96.55 V98.45 M360.0 96.05 V98.95 M361.0 96.55 V98.45 M362.0 96.55 V98.45 M363.0 96.55 V98.45 M364.0 96.55 V98.45 M365.0 96.55 V98.45 M366.0 96.55 V98.45 M367.0 96.55 V98.45 M368.0 96.55 V98.45 M369.0 96.55 V98.45 M370.0 96.55 V98.45 M371.0 96.55 V98.45 M372.0 96.55 V98.45 M373.0 96.55 V98.45 M374.0 96.55 V98.45 M375.0 96.55 V98.45 M376.0 96.55 V98.45 M377.0 96.55 V98.45 M378.0 96.55 V98.45 M379.0 96.55 V98.45 M380.0 96.55 V98.45 M381.0 96.55 V98.45 M382.0 96.55 V98.45 M383.0 96.55 V98.45 M384.0 96.55 V98.45 M385.0 96.20 V98.80 M386.0 96.55 V98.45 M387.0 96.55 V98.45 M388.0 96.55 V98.45 M389.0 96.55 V98.45 M390.0 96.55 V98.45 M391.0 96.55 V98.45 M392.0 96.55 V98.45 M393.0 96.05 V98.95 M394.0 96.55 V98.45 M395.0 96.55 V98.45 M396.0 96.55 V98.45 M397.0 96.55 V98.45 M398.0 96.55 V98.45 M399.0 96.20 V98.80 M400.0 96.55 V98.45 M401.0 96.55 V98.45 M402.0 96.55 V98.45 M403.0 96.55 V98.45 M404.0 96.55 V98.45 M405.0 96.20 V98.80 M406.0 96.55 V98.45 M407.0 96.55 V98.45 M408.0 96.55 V98.45 M409.0 96.55 V98.45 M410.0 96.55 V98.45 M411.0 96.55 V98.45 M412.0 96.20 V98.80 M413.0 96.55 V98.45 M414.0 96.55 V98.45 M415.0 96.55 V98.45 M416.0 96.55 V98.45 M417.0 96.55 V98.45 M418.0 96.55 V98.45 M419.0 96.55 V98.45 M420.0 96.55 V98.45 M421.0 96.55 V98.45 M422.0 96.55 V98.45 M423.0 96.55 V98.45 M424.0 96.55 V98.45 M425.0 96.55 V98.45 M426.0 96.55 V98.45 M427.0 96.20 V98.80 M428.0 96.55 V98.45 M429.0 96.55 V98.45 M430.0 96.55 V98.45 M431.0 96.55 V98.45 M432.0 96.55 V98.45 M433.0 96.55 V98.45 M434.0 96.55 V98.45 M435.0 96.55 V98.45 M436.0 96.55 V98.45 M437.0 96.55 V98.45 M438.0 96.55 V98.45 M439.0 96.55 V98.45 M440.0 96.55 V98.45 M441.0 96.55 V98.45 M442.0 96.55 V98.45 M443.0 96.55 V98.45 M444.0 96.55 V98.45 M445.0 96.55 V98.45 M446.0 96.55 V98.45 M447.0 96.55 V98.45 M448.0 96.55 V98.45 M449.0 96.20 V98.80 M450.0 96.55 V98.45 M451.0 96.55 V98.45 M452.0 96.55 V98.45 M453.0 96.55 V98.45 M454.0 96.55 V98.45 M455.0 96.55 V98.45 M456.0 96.55 V98.45 M457.0 96.55 V98.45 M458.0 96.55 V98.45 M459.0 96.55 V98.45 M460.0 96.55 V98.45 M461.0 96.20 V98.80 M462.0 96.55 V98.45 M463.0 96.55 V98.45 M464.0 96.55 V98.45 M465.0 96.20 V98.80 M466.0 96.55 V98.45 M467.0 96.55 V98.45 M468.0 96.55 V98.45 M469.0 96.55 V98.45 M470.0 96.55 V98.45 M471.0 96.55 V98.45 M472.0 96.55 V98.45 M473.0 96.55 V98.45 M474.0 96.55 V98.45 M475.0 96.55 V98.45 M476.0 96.20 V98.80 M477.0 96.55 V98.45 M478.0 96.55 V98.45 M479.0 96.55 V98.45 M480.0 96.20 V98.80 M481.0 96.55 V98.45 M482.0 96.55 V98.45 M483.0 96.55 V98.45 M484.0 96.55 V98.45 M485.0 96.55 V98.45 M486.0 96.55 V98.45 M487.0 96.55 V98.45 M488.0 96.55 V98.45 M489.0 96.55 V98.45 M490.0 96.55 V98.45 M491.0 96.55 V98.45 M492.0 96.55 V98.45 M493.0 96.55 V98.45 M494.0 96.55 V98.45 M495.0 96.55 V98.45 M496.0 96.55 V98.45 M497.0 96.55 V98.45 M498.0 96.55 V98.45 M499.0 96.55 V98.45 M500.0 96.55 V98.45 M501.0 96.20 V98.80 M502.0 96.55 V98.45 M503.0 96.55 V98.45 M504.0 96.55 V98.45 M505.0 96.55 V98.45 M506.0 96.55 V98.45 M507.0 96.55 V98.45 M508.0 96.55 V98.45 M509.0 96.20 V98.80 M510.0 96.55 V98.45 M511.0 96.55 V98.45 M512.0 96.55 V98.45 M513.0 96.55 V98.45 M514.0 96.55 V98.45 M515.0 96.55 V98.45 M516.0 96.55 V98.45 M517.0 96.55 V98.45 M518.0 96.55 V98.45 M519.0 96.55 V98.45 M520.0 96.55 V98.45 M521.0 96.55 V98.45 M522.0 96.55 V98.45 M523.0 96.55 V98.45 M524.0 96.55 V98.45 M525.0 96.55 V98.45 M526.0 96.55 V98.45 M527.0 96.55 V98.45 M528.0 96.20 V98.80 M529.0 96.55 V98.45 M530.0 96.55 V98.45 M531.0 96.55 V98.45 M532.0 96.55 V98.45 M533.0 96.55 V98.45 M534.0 96.55 V98.45 M535.0 96.20 V98.80 M536.0 96.55 V98.45 M537.0 96.55 V98.45 M538.0 96.55 V98.45 M539.0 96.55 V98.45 M540.0 96.55 V98.45 M541.0 96.55 V98.45 M542.0 96.55 V98.45 M543.0 96.55 V98.45 M544.0 96.55 V98.45 M545.0 96.55 V98.45 M546.0 96.55 V98.45 M547.0 96.55 V98.45 M548.0 96.55 V98.45 M549.0 96.55 V98.45 M550.0 96.55 V98.45 M551.0 96.55 V98.45 M552.0 96.55 V98.45 M553.0 96.05 V98.95 M554.0 96.20 V98.80 M555.0 96.55 V98.45 M556.0 96.55 V98.45 M557.0 96.55 V98.45 M558.0 96.55 V98.45 M559.0 96.20 V98.80 M560.0 96.55 V98.45 M561.0 96.55 V98.45 M562.0 96.55 V98.45 M563.0 96.55 V98.45 M564.0 96.55 V98.45 M565.0 96.55 V98.45 M566.0 96.55 V98.45 M567.0 96.55 V98.45 M568.0 96.55 V98.45 M569.0 96.20 V98.80 M570.0 96.55 V98.45 M571.0 96.55 V98.45 M572.0 96.55 V98.45 M573.0 96.55 V98.45 M574.0 96.20 V98.80 M575.0 96.55 V98.45 M576.0 96.20 V98.80 M577.0 96.20 V98.80 M578.0 96.55 V98.45 M579.0 96.55 V98.45 M580.0 96.55 V98.45 M581.0 96.55 V98.45 M582.0 96.55 V98.45 M583.0 96.20 V98.80 M584.0 96.55 V98.45 M585.0 96.20 V98.80 M586.0 96.55 V98.45 M587.0 96.55 V98.45 M588.0 96.55 V98.45 M589.0 96.55 V98.45 M590.0 96.55 V98.45 M591.0 96.55 V98.45 M592.0 96.55 V98.45 M593.0 96.55 V98.45 M594.0 96.55 V98.45 M595.0 96.55 V98.45 M596.0 96.55 V98.45 M597.0 96.05 V98.95 M598.0 96.55 V98.45 M599.0 96.55 V98.45 M600.0 96.55 V98.45 M601.0 96.55 V98.45 M602.0 96.55 V98.45 M603.0 96.55 V98.45 M604.0 96.55 V98.45 M605.0 96.55 V98.45 M606.0 96.55 V98.45 M607.0 96.55 V98.45 M608.0 96.55 V98.45 M609.0 96.55 V98.45 M610.0 96.20 V98.80 M611.0 96.55 V98.45 M612.0 96.55 V98.45 M613.0 96.55 V98.45 M614.0 96.20 V98.80 M615.0 96.55 V98.45 M616.0 96.55 V98.45 M617.0 96.20 V98.80 M618.0 96.55 V98.45 M619.0 96.55 V98.45 M620.0 96.20 V98.80 M621.0 96.55 V98.45 M622.0 96.55 V98.45 M623.0 96.55 V98.45 M624.0 96.55 V98.45 M625.0 96.55 V98.45 M626.0 96.55 V98.45 M627.0 96.55 V98.45 M628.0 96.55 V98.45 M629.0 96.55 V98.45 M630.0 96.20 V98.80 M631.0 96.55 V98.45 M632.0 96.55 V98.45 M633.0 96.55 V98.45 M634.0 96.55 V98.45 M635.0 96.20 V98.80 M636.0 96.55 V98.45 M637.0 96.55 V98.45 M638.0 96.55 V98.45 M639.0 96.55 V98.45 M640.0 96.55 V98.45 M641.0 96.20 V98.80 M642.0 96.55 V98.45 M643.0 96.20 V98.80 M644.0 96.55 V98.45 M645.0 96.55 V98.45 M646.0 96.55 V98.45 M647.0 96.55 V98.45 M648.0 96.55 V98.45 M649.0 96.55 V98.45 M650.0 96.55 V98.45 M651.0 96.55 V98.45 M652.0 96.55 V98.45 M653.0 96.55 V98.45 M654.0 96.55 V98.45 M655.0 96.55 V98.45 M656.0 96.55 V98.45 M657.0 96.55 V98.45 M658.0 96.55 V98.45 M659.0 96.55 V98.45 M660.0 96.55 V98.45 M661.0 96.55 V98.45 M662.0 96.55 V98.45 M663.0 96.55 V98.45 M664.0 96.55 V98.45 M665.0 96.55 V98.45 M666.0 96.55 V98.45 M667.0 96.55 V98.45 M668.0 96.55 V98.45 M669.0 96.55 V98.45 M670.0 96.55 V98.45 M671.0 96.55 V98.45 M672.0 96.55 V98.45 M673.0 96.55 V98.45 M674.0 96.55 V98.45 M675.0 96.55 V98.45 M676.0 96.55 V98.45 M677.0 96.55 V98.45 M678.0 96.55 V98.45 M679.0 96.55 V98.45 M680.0 96.55 V98.45 M681.0 96.55 V98.45 M682.0 96.55 V98.45 M683.0 96.55 V98.45 M684.0 96.55 V98.45 M685.0 96.55 V98.45 M686.0 96.55 V98.45 M687.0 96.55 V98.45 M688.0 96.55 V98.45 M689.0 96.55 V98.45 M690.0 96.55 V98.45 M691.0 96.55 V98.45 M692.0 96.55 V98.45 M693.0 96.55 V98.45 M694.0 96.55 V98.45 M695.0 96.55 V98.45 M696.0 96.55 V98.45 M697.0 96.55 V98.45 M698.0 96.55 V98.45 M699.0 96.55 V98.45 M700.0 96.55 V98.45 M701.0 96.55 V98.45 M702.0 96.55 V98.45 M703.0 96.55 V98.45 M704.0 96.55 V98.45 M705.0 96.55 V98.45 M706.0 96.20 V98.80 M707.0 96.55 V98.45 M708.0 96.55 V98.45 M709.0 96.55 V98.45 M710.0 96.55 V98.45 M711.0 96.55 V98.45 M712.0 96.55 V98.45 M713.0 96.55 V98.45 M714.0 96.55 V98.45 M715.0 96.55 V98.45 M716.0 96.55 V98.45 M717.0 96.55 V98.45 M718.0 96.55 V98.45 M719.0 96.20 V98.80 M720.0 96.55 V98.45 M721.0 96.55 V98.45 M722.0 96.55 V98.45 M723.0 96.55 V98.45 M724.0 96.55 V98.45 M725.0 96.55 V98.45 M726.0 96.55 V98.45 M727.0 96.55 V98.45 M728.0 96.55 V98.45 M729.0 96.55 V98.45 M730.0 96.55 V98.45 M731.0 96.55 V98.45 M732.0 96.55 V98.45 M733.0 96.55 V98.45 M734.0 96.55 V98.45 M735.0 96.55 V98.45 M736.0 96.55 V98.45 M737.0 96.55 V98.45 M738.0 96.20 V98.80 M739.0 96.55 V98.45 M740.0 96.55 V98.45 M741.0 96.55 V98.45 M742.0 96.55 V98.45 M743.0 96.55 V98.45 M744.0 96.20 V98.80 M745.0 96.55 V98.45 M746.0 96.55 V98.45 M747.0 96.05 V98.95 M748.0 96.20 V98.80 M749.0 96.55 V98.45 M750.0 96.55 V98.45 M751.0 96.55 V98.45 M752.0 96.55 V98.45 M753.0 96.55 V98.45 M754.0 96.55 V98.45 M755.0 96.55 V98.45 M756.0 96.55 V98.45 M757.0 96.55 V98.45 M758.0 96.55 V98.45 M759.0 96.55 V98.45 M760.0 96.55 V98.45 M761.0 96.55 V98.45 M762.0 96.55 V98.45 M763.0 96.55 V98.45 M764.0 96.55 V98.45 M765.0 96.55 V98.45 M766.0 96.55 V98.45 M767.0 96.20 V98.80 M768.0 96.55 V98.45 M769.0 96.55 V98.45 M770.0 96.55 V98.45 M771.0 96.55 V98.45 M772.0 96.55 V98.45 M773.0 96.20 V98.80 M774.0 96.55 V98.45 M775.0 96.55 V98.45 M776.0 96.55 V98.45 M777.0 96.55 V98.45 M778.0 96.55 V98.45 M779.0 96.55 V98.45 M780.0 96.55 V98.45 M781.0 96.55 V98.45 M782.0 96.55 V98.45 M783.0 96.55 V98.45 M784.0 96.55 V98.45 M785.0 96.55 V98.45 M786.0 96.55 V98.45 M787.0 96.55 V98.45 M788.0 96.55 V98.45 M789.0 96.55 V98.45 M790.0 96.55 V98.45 M791.0 96.55 V98.45 M792.0 96.20 V98.80 M793.0 96.55 V98.45 M794.0 96.20 V98.80 M795.0 96.20 V98.80 M796.0 96.55 V98.45 M797.0 96.55 V98.45 M798.0 96.55 V98.45 M799.0 96.55 V98.45 M800.0 96.55 V98.45 M801.0 96.55 V98.45 M802.0 96.55 V98.45 M803.0 96.55 V98.45 M804.0 96.55 V98.45 M805.0 96.55 V98.45 M806.0 96.55 V98.45 M807.0 96.55 V98.45 M808.0 96.55 V98.45 M809.0 96.55 V98.45 M810.0 96.55 V98.45 M811.0 96.55 V98.45 M812.0 96.20 V98.80 M813.0 96.20 V98.80 M814.0 96.55 V98.45 M815.0 96.55 V98.45 M816.0 96.20 V98.80 M817.0 96.55 V98.45 M818.0 96.55 V98.45 M819.0 96.55 V98.45 M820.0 96.55 V98.45 M821.0 96.05 V98.95 M822.0 96.20 V98.80 M823.0 96.55 V98.45 M824.0 96.55 V98.45 M825.0 96.05 V98.95 M826.0 96.55 V98.45 M827.0 96.55 V98.45 M828.0 96.20 V98.80 M829.0 96.55 V98.45 M830.0 96.55 V98.45 M831.0 96.55 V98.45 M832.0 96.55 V98.45 M833.0 96.55 V98.45 M834.0 96.05 V98.95 M835.0 96.20 V98.80 M836.0 96.55 V98.45 M837.0 96.55 V98.45 M838.0 96.55 V98.45 M839.0 96.55 V98.45 M840.0 96.55 V98.45 M841.0 96.55 V98.45 M842.0 96.55 V98.45 M843.0 96.55 V98.45 M844.0 96.55 V98.45 M845.0 96.55 V98.45 M846.0 96.55 V98.45 M847.0 96.55 V98.45 M848.0 96.20 V98.80 M849.0 96.55 V98.45 M850.0 96.55 V98.45 M851.0 96.55 V98.45 M852.0 96.55 V98.45 M853.0 96.55 V98.45 M854.0 96.55 V98.45 M855.0 96.55 V98.45 M856.0 96.55 V98.45 M857.0 96.20 V98.80 M858.0 96.55 V98.45 M859.0 96.55 V98.45 M860.0 96.20 V98.80 M861.0 96.55 V98.45 M862.0 96.55 V98.45 M863.0 96.55 V98.45 M864.0 96.55 V98.45 M865.0 96.55 V98.45 M866.0 96.55 V98.45 M867.0 96.55 V98.45 M868.0 96.55 V98.45 M869.0 96.55 V98.45 M870.0 96.55 V98.45 M871.0 96.55 V98.45 M872.0 96.55 V98.45 M873.0 96.55 V98.45 M874.0 96.55 V98.45 M875.0 96.55 V98.45 M876.0 96.55 V98.45 M877.0 96.55 V98.45 M878.0 96.55 V98.45 M879.0 96.55 V98.45 M880.0 96.55 V98.45 M881.0 96.55 V98.45 M882.0 96.55 V98.45 M883.0 96.55 V98.45 M884.0 96.55 V98.45 M885.0 96.55 V98.45 M886.0 96.55 V98.45 M887.0 96.55 V98.45 M888.0 96.20 V98.80 M889.0 96.55 V98.45 M890.0 96.55 V98.45 M891.0 96.55 V98.45 M892.0 96.55 V98.45 M893.0 96.55 V98.45 M894.0 96.55 V98.45 M895.0 96.55 V98.45 M896.0 96.55 V98.45 M897.0 96.55 V98.45 M898.0 96.55 V98.45 M899.0 96.55 V98.45 M900.0 96.55 V98.45 M901.0 96.55 V98.45 M902.0 96.55 V98.45 M903.0 96.55 V98.45 M904.0 96.55 V98.45 M905.0 96.55 V98.45 M906.0 96.55 V98.45 M907.0 96.55 V98.45 M908.0 96.55 V98.45 M909.0 96.55 V98.45 M910.0 96.55 V98.45 M911.0 96.55 V98.45 M912.0 96.55 V98.45 M913.0 96.20 V98.80 M914.0 96.55 V98.45 M915.0 96.55 V98.45 M916.0 96.55 V98.45 M917.0 96.55 V98.45 M918.0 96.55 V98.45 M919.0 96.55 V98.45 M920.0 96.55 V98.45 M921.0 96.05 V98.95 M922.0 96.55 V98.45 M923.0 96.20 V98.80 M924.0 96.55 V98.45 M925.0 96.55 V98.45 M926.0 96.55 V98.45 M927.0 96.55 V98.45 M928.0 96.55 V98.45 " stroke="#fff" stroke-width="1.050"/><path d="M20 93 V103 M928.9 93 V103" stroke="#fff" stroke-width="1.200"/><path d="M18 114.500 H930.4" stroke="#7d5f96" stroke-width="1"/></svg>
<!--/TL1-->
<!--TL2-->
<div class="clip" style="left:16.2px;top:124px;width:152.6px;height:37px;background:#f4ecd9;border-color:#e0e0e0"><svg class="abs" style="left:0;top:0" width="150.6" height="35" viewBox="0 0 150.6 35"><g transform="translate(0.0 0)"><rect width="49" height="35" fill="#f5f0e2"/><ellipse cx="23" cy="21.500" rx="21.500" ry="13.500" fill="#fbf9ef"/><ellipse cx="23" cy="21.500" rx="19.500" ry="11.500" fill="none" stroke="#f7dc2a" stroke-width="4" stroke-dasharray="4.200 4.200"/><ellipse cx="23" cy="22" rx="14.500" ry="7.500" fill="#faf7ec"/><circle cx="14.500" cy="9.500" r="6.200" fill="#e9d25c"/><circle cx="13" cy="8.500" r="3.500" fill="#f0de78"/><circle cx="3.500" cy="10" r="3.800" fill="#c8a878"/><path d="M9.500 28.500 L26.500 6 L41.500 15 L40 18.500 Z" fill="#f3e770"/><path d="M9.500 28.500 L40 18.500 L40 21 L11 30.500 Z" fill="#ead95e"/></g><g transform="translate(48.7 0)"><rect width="49" height="35" fill="#f5f0e2"/><ellipse cx="23" cy="21.500" rx="21.500" ry="13.500" fill="#fbf9ef"/><ellipse cx="23" cy="21.500" rx="19.500" ry="11.500" fill="none" stroke="#f7dc2a" stroke-width="4" stroke-dasharray="4.200 4.200"/><ellipse cx="23" cy="22" rx="14.500" ry="7.500" fill="#faf7ec"/><circle cx="14.500" cy="9.500" r="6.200" fill="#e9d25c"/><circle cx="13" cy="8.500" r="3.500" fill="#f0de78"/><circle cx="3.500" cy="10" r="3.800" fill="#c8a878"/><path d="M9.500 28.500 L26.500 6 L41.500 15 L40 18.500 Z" fill="#f3e770"/><path d="M9.500 28.500 L40 18.500 L40 21 L11 30.500 Z" fill="#ead95e"/></g><g transform="translate(97.4 0)"><rect width="49" height="35" fill="#f5f0e2"/><ellipse cx="23" cy="21.500" rx="21.500" ry="13.500" fill="#fbf9ef"/><ellipse cx="23" cy="21.500" rx="19.500" ry="11.500" fill="none" stroke="#f7dc2a" stroke-width="4" stroke-dasharray="4.200 4.200"/><ellipse cx="23" cy="22" rx="14.500" ry="7.500" fill="#faf7ec"/><circle cx="14.500" cy="9.500" r="6.200" fill="#e9d25c"/><circle cx="13" cy="8.500" r="3.500" fill="#f0de78"/><circle cx="3.500" cy="10" r="3.800" fill="#c8a878"/><path d="M9.500 28.500 L26.500 6 L41.500 15 L40 18.500 Z" fill="#f3e770"/><path d="M9.500 28.500 L40 18.500 L40 21 L11 30.500 Z" fill="#ead95e"/></g><g transform="translate(146.1 0)"><rect width="49" height="35" fill="#f5f0e2"/><ellipse cx="23" cy="21.500" rx="21.500" ry="13.500" fill="#fbf9ef"/><ellipse cx="23" cy="21.500" rx="19.500" ry="11.500" fill="none" stroke="#f7dc2a" stroke-width="4" stroke-dasharray="4.200 4.200"/><ellipse cx="23" cy="22" rx="14.500" ry="7.500" fill="#faf7ec"/><circle cx="14.500" cy="9.500" r="6.200" fill="#e9d25c"/><circle cx="13" cy="8.500" r="3.500" fill="#f0de78"/><circle cx="3.500" cy="10" r="3.800" fill="#c8a878"/><path d="M9.500 28.500 L26.500 6 L41.500 15 L40 18.500 Z" fill="#f3e770"/><path d="M9.500 28.500 L40 18.500 L40 21 L11 30.500 Z" fill="#ead95e"/></g></svg><i class="h" style="left:3.500px;top:13px"></i><i class="h" style="left:146.1px;top:13px"></i></div>
<div class="clip" style="left:170.2px;top:124px;width:95.1px;height:37px;background:#3b3210;border-color:#cfcfcf"><svg class="abs" style="left:0;top:0" width="93.1" height="35" viewBox="0 0 93.1 35"><rect width="100" height="35" fill="#3b3210"/><ellipse cx="8" cy="10" rx="8" ry="7.2" fill="#e8b71c"/><ellipse cx="7" cy="9" rx="4.4" ry="4.0" fill="#f3cf3a"/><ellipse cx="22" cy="6" rx="7" ry="6.3" fill="#e8b71c"/><ellipse cx="21" cy="5" rx="3.9" ry="3.5" fill="#f3cf3a"/><ellipse cx="34" cy="14" rx="8" ry="7.2" fill="#e8b71c"/><ellipse cx="33" cy="13" rx="4.4" ry="4.0" fill="#f3cf3a"/><ellipse cx="20" cy="22" rx="8" ry="7.2" fill="#e8b71c"/><ellipse cx="19" cy="21" rx="4.4" ry="4.0" fill="#f3cf3a"/><ellipse cx="6" cy="28" rx="7" ry="6.3" fill="#e8b71c"/><ellipse cx="5" cy="27" rx="3.9" ry="3.5" fill="#f3cf3a"/><ellipse cx="48" cy="8" rx="8" ry="7.2" fill="#e8b71c"/><ellipse cx="47" cy="7" rx="4.4" ry="4.0" fill="#f3cf3a"/><ellipse cx="60" cy="5" rx="7" ry="6.3" fill="#e8b71c"/><ellipse cx="59" cy="4" rx="3.9" ry="3.5" fill="#f3cf3a"/><ellipse cx="72" cy="10" rx="8" ry="7.2" fill="#e8b71c"/><ellipse cx="71" cy="9" rx="4.4" ry="4.0" fill="#f3cf3a"/><ellipse cx="84" cy="6" rx="7" ry="6.3" fill="#e8b71c"/><ellipse cx="83" cy="5" rx="3.9" ry="3.5" fill="#f3cf3a"/><ellipse cx="47" cy="24" rx="7" ry="6.3" fill="#e8b71c"/><ellipse cx="46" cy="23" rx="3.9" ry="3.5" fill="#f3cf3a"/><ellipse cx="62" cy="20" rx="8" ry="7.2" fill="#e8b71c"/><ellipse cx="61" cy="19" rx="4.4" ry="4.0" fill="#f3cf3a"/><ellipse cx="76" cy="26" rx="8" ry="7.2" fill="#e8b71c"/><ellipse cx="75" cy="25" rx="4.4" ry="4.0" fill="#f3cf3a"/><ellipse cx="90" cy="20" rx="7" ry="6.3" fill="#e8b71c"/><ellipse cx="89" cy="19" rx="3.9" ry="3.5" fill="#f3cf3a"/><ellipse cx="36" cy="30" rx="6" ry="5.4" fill="#e8b71c"/><ellipse cx="35" cy="29" rx="3.3" ry="3.0" fill="#f3cf3a"/><ellipse cx="90" cy="33" rx="6" ry="5.4" fill="#e8b71c"/><ellipse cx="89" cy="32" rx="3.3" ry="3.0" fill="#f3cf3a"/><ellipse cx="58" cy="33" rx="6" ry="5.4" fill="#e8b71c"/><ellipse cx="57" cy="32" rx="3.3" ry="3.0" fill="#f3cf3a"/><ellipse cx="9" cy="25" rx="7" ry="6" fill="#f4ecb0"/><ellipse cx="9" cy="25" rx="4.500" ry="4" fill="#e9d870"/><ellipse cx="56" cy="24" rx="8" ry="7" fill="#f4ecb0"/><ellipse cx="56" cy="24" rx="5" ry="4.500" fill="#ead96f"/><ellipse cx="22" cy="33" rx="7" ry="4" fill="#f4ecb0"/><ellipse cx="74" cy="34" rx="7" ry="4" fill="#f1e6a8"/></svg><i class="h" style="left:3.500px;top:13px"></i><i class="h" style="left:88.6px;top:13px"></i></div>
<div class="clip" style="left:266.8px;top:124px;width:138.4px;height:37px;background:#000;border-color:#cfcfcf"><svg class="abs" style="left:0;top:0" width="136.4" height="35" viewBox="0 0 136.4 35"><path d="M24.5 3 V19" stroke="#7a5a40" stroke-width=".7"/><path d="M33.5 22 L47.5 12" stroke="#8a8a8a" stroke-width="1.100"/><ellipse cx="24.5" cy="23" rx="12" ry="2.800" fill="#8f8474"/><ellipse cx="24.5" cy="22.500" rx="10" ry="2.200" fill="#c9581a"/><ellipse cx="24.5" cy="20.800" rx="2.600" ry="2.200" fill="#e07024"/><path d="M21.5 26 L23.5 34 M27.5 26 L25.5 34" stroke="#6a6a6a" stroke-width=".6"/><path d="M74.5 3 V19" stroke="#7a5a40" stroke-width=".7"/><path d="M83.5 22 L97.5 12" stroke="#8a8a8a" stroke-width="1.100"/><ellipse cx="74.5" cy="23" rx="12" ry="2.800" fill="#8f8474"/><ellipse cx="74.5" cy="22.500" rx="10" ry="2.200" fill="#c9581a"/><ellipse cx="74.5" cy="20.800" rx="2.600" ry="2.200" fill="#e07024"/><path d="M71.5 26 L73.5 34 M77.5 26 L75.5 34" stroke="#6a6a6a" stroke-width=".6"/><path d="M123.0 3 V19" stroke="#7a5a40" stroke-width=".7"/><path d="M132.0 22 L146.0 12" stroke="#8a8a8a" stroke-width="1.100"/><ellipse cx="123.0" cy="23" rx="12" ry="2.800" fill="#8f8474"/><ellipse cx="123.0" cy="22.500" rx="10" ry="2.200" fill="#c9581a"/><ellipse cx="123.0" cy="20.800" rx="2.600" ry="2.200" fill="#e07024"/><path d="M120.0 26 L122.0 34 M126.0 26 L124.0 34" stroke="#6a6a6a" stroke-width=".6"/></svg><i class="h" style="left:3.500px;top:13px"></i><i class="h" style="left:131.9px;top:13px"></i></div>
<div class="clip" style="left:406.3px;top:124px;width:114.5px;height:37px;background:#25504a;border-color:#cfcfcf"><svg class="abs" style="left:0;top:0" width="112.5" height="35" viewBox="0 0 112.5 35"><rect width="120" height="19" fill="#000"/><rect x="19.0" y="1" width="30" height="11.500" fill="#b89a96"/><rect x="19.0" y="1" width="14" height="11.500" fill="#5a4a3a"/><ellipse cx="26.0" cy="6.500" rx="5.500" ry="5" fill="#e8c860"/><rect x="33.0" y="2" width="15" height="9" fill="#d2aaa8"/><rect x="68.5" y="1" width="30" height="11.500" fill="#b89a96"/><rect x="68.5" y="1" width="14" height="11.500" fill="#5a4a3a"/><ellipse cx="75.5" cy="6.500" rx="5.500" ry="5" fill="#e8c860"/><rect x="82.5" y="2" width="15" height="9" fill="#d2aaa8"/></svg><i class="h" style="left:3.500px;top:13px"></i><i class="h" style="left:108.0px;top:13px"></i></div>
<div class="clip" style="left:521.9px;top:124px;width:163.6px;height:37px;background:#25504a;border-color:#cfcfcf"><svg class="abs" style="left:0;top:0" width="161.6" height="35" viewBox="0 0 161.6 35"><defs><linearGradient id="bg5" x1="0" y1="0" x2="1" y2="0"><stop offset="0" stop-color="#d3c6a8"/><stop offset=".4" stop-color="#c4baa0"/><stop offset="1" stop-color="#b2ab99"/></linearGradient></defs><rect width="170" height="19" fill="url(#bg5)"/><path d="M0.0 19 L4.0 9 Q12.0 5 20.0 10 L26.0 14 Q34.0 9 42.0 12 L48.0 19 Z" fill="#e6dec9" opacity=".85"/><path d="M22.0 0 H40.0 L38.0 7 Q30.0 9 24.0 5 Z" fill="#e4ded2" opacity=".8"/><path d="M0.0 0 V19" stroke="#a39a86" stroke-width=".6"/><path d="M48.5 19 L52.5 9 Q60.5 5 68.5 10 L74.5 14 Q82.5 9 90.5 12 L96.5 19 Z" fill="#e6dec9" opacity=".85"/><path d="M70.5 0 H88.5 L86.5 7 Q78.5 9 72.5 5 Z" fill="#e4ded2" opacity=".8"/><path d="M48.5 0 V19" stroke="#a39a86" stroke-width=".6"/><path d="M98.0 19 L102.0 9 Q110.0 5 118.0 10 L124.0 14 Q132.0 9 140.0 12 L146.0 19 Z" fill="#e6dec9" opacity=".85"/><path d="M120.0 0 H138.0 L136.0 7 Q128.0 9 122.0 5 Z" fill="#e4ded2" opacity=".8"/><path d="M98.0 0 V19" stroke="#a39a86" stroke-width=".6"/><path d="M147.0 19 L151.0 9 Q159.0 5 167.0 10 L173.0 14 Q181.0 9 189.0 12 L195.0 19 Z" fill="#e6dec9" opacity=".85"/><path d="M169.0 0 H187.0 L185.0 7 Q177.0 9 171.0 5 Z" fill="#e4ded2" opacity=".8"/><path d="M147.0 0 V19" stroke="#a39a86" stroke-width=".6"/></svg><i class="h" style="left:3.500px;top:13px"></i><i class="h" style="left:157.1px;top:13px"></i></div>
<div class="clip" style="left:686.9px;top:124px;width:112.0px;height:37px;background:#e2b6c4;border-color:#e8d8e0"><svg class="abs" style="left:0;top:0" width="110.0" height="35" viewBox="0 0 110.0 35"><rect width="112" height="35" fill="#e2b6c4"/><ellipse cx="22" cy="20" rx="19" ry="14" fill="#ecc6d0"/><path d="M34 0 H48.500 V35 H44 Q46 18 34 0 Z" fill="#dcd6da"/><path d="M8 8 Q20 2 34 8" stroke="#c48ea0" stroke-width="1" fill="none"/><rect x="48.500" y="0" width="48.500" height="35" fill="#caa8ba"/><path d="M48.500 22 L75 14 L97 26 V35 H48.500 Z" fill="#c9c6d0"/><path d="M60 22 L97 30 V35 H70 Z" fill="#aeb0bc"/><path d="M80 0 H97 V14 Q88 16 80 0 Z" fill="#e9c8b2"/><rect x="97" y="0" width="15" height="35" fill="#e3c2cf"/><rect x="102" y="9" width="6" height="16" rx="2" fill="#efe0e6" stroke="#c9a9b8" stroke-width=".6"/></svg></div>
<div class="clip" style="left:800.2px;top:124px;width:132.3px;height:37px;background:#b57a98;border-color:#e8d0dc"><svg class="abs" style="left:0;top:0" width="129.8" height="35" viewBox="0 0 129.8 35"><defs><linearGradient id="bg7" x1="0" y1="0" x2="0" y2="1"><stop offset="0" stop-color="#a86c8c"/><stop offset="1" stop-color="#c98aa8"/></linearGradient></defs><rect width="132" height="35" fill="url(#bg7)"/><ellipse cx="30" cy="20" rx="10" ry="9" fill="#2b1a2a"/><circle cx="31.5" cy="22.6" r="1.500" fill="#47304a"/><circle cx="33.5" cy="24.8" r="1.500" fill="#47304a"/><circle cx="32.9" cy="24.6" r="1.500" fill="#47304a"/><circle cx="24.3" cy="19.6" r="1.500" fill="#47304a"/><circle cx="35.3" cy="21.6" r="1.500" fill="#47304a"/><ellipse cx="15" cy="9" rx="6" ry="5" fill="#2b1a2a"/><circle cx="17.9" cy="6.7" r="1.500" fill="#47304a"/><circle cx="14.8" cy="7.5" r="1.500" fill="#47304a"/><circle cx="15.3" cy="9.4" r="1.500" fill="#47304a"/><circle cx="11.5" cy="7.3" r="1.500" fill="#47304a"/><circle cx="13.4" cy="11.5" r="1.500" fill="#47304a"/><ellipse cx="42" cy="4" rx="7" ry="5" fill="#2b1a2a"/><circle cx="44.2" cy="2.0" r="1.500" fill="#47304a"/><circle cx="44.5" cy="1.8" r="1.500" fill="#47304a"/><circle cx="43.0" cy="1.8" r="1.500" fill="#47304a"/><circle cx="37.8" cy="6.2" r="1.500" fill="#47304a"/><circle cx="39.6" cy="2.3" r="1.500" fill="#47304a"/><ellipse cx="57" cy="22" rx="7" ry="8" fill="#2b1a2a"/><circle cx="61.1" cy="25.6" r="1.500" fill="#47304a"/><circle cx="55.2" cy="26.4" r="1.500" fill="#47304a"/><circle cx="57.3" cy="23.7" r="1.500" fill="#47304a"/><circle cx="54.5" cy="26.2" r="1.500" fill="#47304a"/><circle cx="58.6" cy="26.5" r="1.500" fill="#47304a"/><ellipse cx="70" cy="13" rx="8" ry="7" fill="#2b1a2a"/><circle cx="73.8" cy="11.3" r="1.500" fill="#47304a"/><circle cx="68.7" cy="10.2" r="1.500" fill="#47304a"/><circle cx="66.6" cy="9.3" r="1.500" fill="#47304a"/><circle cx="68.1" cy="13.9" r="1.500" fill="#47304a"/><circle cx="65.2" cy="14.5" r="1.500" fill="#47304a"/><ellipse cx="66" cy="30" rx="9" ry="5" fill="#2b1a2a"/><circle cx="64.2" cy="28.9" r="1.500" fill="#47304a"/><circle cx="69.4" cy="29.9" r="1.500" fill="#47304a"/><circle cx="64.0" cy="29.9" r="1.500" fill="#47304a"/><circle cx="68.2" cy="27.3" r="1.500" fill="#47304a"/><circle cx="71.1" cy="27.1" r="1.500" fill="#47304a"/><ellipse cx="82" cy="26" rx="10" ry="8" fill="#2b1a2a"/><circle cx="85.0" cy="29.3" r="1.500" fill="#47304a"/><circle cx="76.2" cy="28.8" r="1.500" fill="#47304a"/><circle cx="80.4" cy="26.8" r="1.500" fill="#47304a"/><circle cx="76.1" cy="21.6" r="1.500" fill="#47304a"/><circle cx="78.2" cy="30.4" r="1.500" fill="#47304a"/><ellipse cx="96" cy="8" rx="9" ry="7" fill="#2b1a2a"/><circle cx="92.7" cy="10.1" r="1.500" fill="#47304a"/><circle cx="100.6" cy="11.7" r="1.500" fill="#47304a"/><circle cx="94.3" cy="6.8" r="1.500" fill="#47304a"/><circle cx="96.3" cy="10.3" r="1.500" fill="#47304a"/><circle cx="91.8" cy="10.1" r="1.500" fill="#47304a"/><ellipse cx="106" cy="21" rx="8" ry="8" fill="#2b1a2a"/><circle cx="108.9" cy="24.5" r="1.500" fill="#47304a"/><circle cx="101.6" cy="25.3" r="1.500" fill="#47304a"/><circle cx="102.1" cy="19.5" r="1.500" fill="#47304a"/><circle cx="107.1" cy="25.0" r="1.500" fill="#47304a"/><circle cx="104.5" cy="25.1" r="1.500" fill="#47304a"/><ellipse cx="119" cy="27" rx="9" ry="7" fill="#2b1a2a"/><circle cx="119.5" cy="25.4" r="1.500" fill="#47304a"/><circle cx="117.0" cy="24.3" r="1.500" fill="#47304a"/><circle cx="114.4" cy="24.1" r="1.500" fill="#47304a"/><circle cx="121.0" cy="31.2" r="1.500" fill="#47304a"/><circle cx="115.3" cy="23.2" r="1.500" fill="#47304a"/><ellipse cx="92" cy="33" rx="8" ry="4" fill="#2b1a2a"/><circle cx="96.7" cy="33.2" r="1.500" fill="#47304a"/><circle cx="91.1" cy="31.7" r="1.500" fill="#47304a"/><circle cx="92.9" cy="34.6" r="1.500" fill="#47304a"/><circle cx="91.6" cy="32.6" r="1.500" fill="#47304a"/><circle cx="87.7" cy="35.0" r="1.500" fill="#47304a"/><ellipse cx="112" cy="5" rx="7" ry="4" fill="#2b1a2a"/><circle cx="108.1" cy="5.0" r="1.500" fill="#47304a"/><circle cx="114.8" cy="3.2" r="1.500" fill="#47304a"/><circle cx="113.9" cy="7.2" r="1.500" fill="#47304a"/><circle cx="113.1" cy="6.4" r="1.500" fill="#47304a"/><circle cx="108.7" cy="4.7" r="1.500" fill="#47304a"/><ellipse cx="125" cy="11" rx="6" ry="6" fill="#2b1a2a"/><circle cx="122.5" cy="13.5" r="1.500" fill="#47304a"/><circle cx="123.5" cy="10.7" r="1.500" fill="#47304a"/><circle cx="128.6" cy="13.5" r="1.500" fill="#47304a"/><circle cx="128.4" cy="10.7" r="1.500" fill="#47304a"/><circle cx="124.9" cy="12.7" r="1.500" fill="#47304a"/><ellipse cx="50" cy="33" rx="6" ry="3" fill="#2b1a2a"/><circle cx="49.8" cy="32.2" r="1.500" fill="#47304a"/><circle cx="49.3" cy="31.7" r="1.500" fill="#47304a"/><circle cx="49.1" cy="34.8" r="1.500" fill="#47304a"/><circle cx="53.3" cy="33.5" r="1.500" fill="#47304a"/><circle cx="50.0" cy="32.4" r="1.500" fill="#47304a"/><ellipse cx="78" cy="4" rx="6" ry="4" fill="#2b1a2a"/><circle cx="75.0" cy="2.9" r="1.500" fill="#47304a"/><circle cx="80.0" cy="5.8" r="1.500" fill="#47304a"/><circle cx="77.0" cy="5.4" r="1.500" fill="#47304a"/><circle cx="80.0" cy="4.9" r="1.500" fill="#47304a"/><circle cx="79.2" cy="5.2" r="1.500" fill="#47304a"/><path d="M48.500 0 V35" stroke="#8a5a78" stroke-width=".6"/><path d="M97 0 V35" stroke="#8a5a78" stroke-width=".6"/></svg><i class="h" style="left:3.500px;top:13px"></i><i class="h" style="left:125.3px;top:13px"></i></div>
<div class="clip" style="left:16.200px;top:168.75px;width:727.8px;height:37px;background:#25504a"></div>
<svg class="abs" style="left:0;top:0" width="1000" height="212" viewBox="0 0 1000 212"><path d="M18.0 186.6 L19.3 185.7 L20.6 184.8 L21.9 176.6 L23.2 176.6 L24.5 174.4 L25.8 173.7 L27.1 176.4 L28.4 183.9 L29.7 175.1 L31.0 173.2 L32.3 174.3 L33.6 173.6 L34.9 174.4 L36.2 174.3 L37.5 176.7 L38.8 176.0 L40.1 175.3 L41.4 184.5 L42.7 176.7 L44.0 176.2 L45.3 178.7 L46.6 177.3 L47.9 184.8 L49.2 184.8 L50.5 184.4 L51.8 176.4 L53.1 174.0 L54.4 174.9 L55.7 174.8 L57.0 176.0 L58.3 174.9 L59.6 176.3 L60.9 175.9 L62.2 176.2 L63.5 176.6 L64.8 185.2 L66.1 180.3 L67.4 179.0 L68.7 178.7 L70.0 179.3 L71.3 180.4 L72.6 179.9 L73.9 181.0 L75.2 180.8 L76.5 180.4 L77.8 181.4 L79.1 181.0 L80.4 185.9 L81.7 181.3 L83.0 182.3 L84.3 181.8 L85.6 182.4 L86.9 184.3 L88.2 186.7 L89.5 184.7 L90.8 184.9 L92.1 184.5 L93.4 181.0 L94.7 180.8 L96.0 179.4 L97.3 179.5 L98.6 179.8 L99.9 178.6 L101.2 180.4 L102.5 185.8 L103.8 179.3 L105.1 177.5 L106.4 177.6 L107.7 179.3 L109.0 179.2 L110.3 177.7 L111.6 178.4 L112.9 179.5 L114.2 178.7 L115.5 185.4 L116.8 185.4 L118.1 181.3 L119.4 180.8 L120.7 180.8 L122.0 180.3 L123.3 181.2 L124.6 180.4 L125.9 179.4 L127.2 180.0 L128.5 180.3 L129.8 185.6 L131.1 185.8 L132.4 181.1 L133.7 179.9 L135.0 180.4 L136.3 180.6 L137.6 181.1 L138.9 181.5 L140.2 183.5 L141.5 184.8 L142.8 184.8 L144.1 185.2 L145.4 185.7 L146.7 186.1 L148.0 186.2 L149.3 183.6 L150.6 177.4 L151.9 175.0 L153.2 174.8 L154.5 174.5 L155.8 174.9 L157.1 184.5 L158.4 184.2 L159.7 171.8 L161.0 174.5 L162.3 174.6 L163.6 174.3 L164.9 175.5 L166.2 185.2 L167.5 184.8 L168.8 175.2 L170.1 177.1 L171.4 175.7 L172.7 174.8 L174.0 175.7 L175.3 175.1 L176.6 176.9 L177.9 176.1 L179.2 175.2 L180.5 175.2 L181.8 177.1 L183.1 184.8 L184.4 178.0 L185.7 177.9 L187.0 175.8 L188.3 178.0 L189.6 185.2 L190.9 179.8 L192.2 178.2 L193.5 178.6 L194.8 179.8 L196.1 180.3 L197.4 179.3 L198.7 180.2 L200.0 180.0 L201.3 180.5 L202.6 179.5 L203.9 181.2 L205.2 185.6 L206.5 185.7 L207.8 185.7 L209.1 179.1 L210.4 180.5 L211.7 179.6 L213.0 180.4 L214.3 180.7 L215.6 180.0 L216.9 180.3 L218.2 181.9 L219.5 186.3 L220.8 186.3 L222.1 186.4 L223.4 182.6 L224.7 182.6 L226.0 183.3 L227.3 182.6 L228.6 182.8 L229.9 183.4 L231.2 186.3 L232.5 186.4 L233.8 186.6 L235.1 184.4 L236.4 184.9 L237.7 185.5 L239.0 186.1 L240.3 186.7 L241.6 186.5 L242.9 186.6 L244.2 186.5 L245.5 186.6 L246.8 186.6 L248.1 186.5 L249.4 186.5 L250.7 186.5 L252.0 181.4 L253.3 184.6 L254.6 184.9 L255.9 173.0 L257.2 172.4 L258.5 174.6 L259.8 172.7 L261.1 172.8 L262.4 174.1 L263.7 172.6 L265.0 172.3 L266.3 184.7 L267.6 184.9 L268.9 174.9 L270.2 174.5 L271.5 174.8 L272.8 175.2 L274.1 175.7 L275.4 184.7 L276.7 184.4 L278.0 184.5 L279.3 176.6 L280.6 176.4 L281.9 175.8 L283.2 175.6 L284.5 177.1 L285.8 177.1 L287.1 185.2 L288.4 184.8 L289.7 176.6 L291.0 177.2 L292.3 176.8 L293.6 176.8 L294.9 177.1 L296.2 175.5 L297.5 175.6 L298.8 175.8 L300.1 177.3 L301.4 177.8 L302.7 185.1 L304.0 184.9 L305.3 176.5 L306.6 177.1 L307.9 177.4 L309.2 175.9 L310.5 185.3 L311.8 185.4 L313.1 179.1 L314.4 178.0 L315.7 177.6 L317.0 179.0 L318.3 178.9 L319.6 178.5 L320.9 178.8 L322.2 179.0 L323.5 177.8 L324.8 185.3 L326.1 180.8 L327.4 179.6 L328.7 181.1 L330.0 180.7 L331.3 180.7 L332.6 179.6 L333.9 179.9 L335.2 180.5 L336.5 185.4 L337.8 185.6 L339.1 180.2 L340.4 180.3 L341.7 181.4 L343.0 181.8 L344.3 182.1 L345.6 182.0 L346.9 181.5 L348.2 182.8 L349.5 182.4 L350.8 183.0 L352.1 186.2 L353.4 186.5 L354.7 185.0 L356.0 185.8 L357.3 185.7 L358.6 185.7 L359.9 185.8 L361.2 185.8 L362.5 185.8 L363.8 185.9 L365.1 186.0 L366.4 185.9 L367.7 186.2 L369.0 186.0 L370.3 186.2 L371.6 186.2 L372.9 186.2 L374.2 186.0 L375.5 186.3 L376.8 186.3 L378.1 186.3 L379.4 186.2 L380.7 186.4 L382.0 186.3 L383.3 186.3 L384.6 186.5 L385.9 186.4 L387.2 178.7 L388.5 170.5 L389.8 172.7 L391.1 183.7 L392.4 175.7 L393.7 176.3 L395.0 174.5 L396.3 177.1 L397.6 177.4 L398.9 178.3 L400.2 178.9 L401.5 176.2 L402.8 174.6 L404.1 173.4 L405.4 183.9 L406.7 184.6 L408.0 170.3 L409.3 173.4 L410.6 173.6 L411.9 173.2 L413.2 171.2 L414.5 172.9 L415.8 170.4 L417.1 184.0 L418.4 184.7 L419.7 177.4 L421.0 178.7 L422.3 177.3 L423.6 174.7 L424.9 172.1 L426.2 172.4 L427.5 184.2 L428.8 184.8 L430.1 174.2 L431.4 174.7 L432.7 174.5 L434.0 173.9 L435.3 185.0 L436.6 178.0 L437.9 177.3 L439.2 178.3 L440.5 179.6 L441.8 179.4 L443.1 178.1 L444.4 178.2 L445.7 179.4 L447.0 178.7 L448.3 179.1 L449.6 178.5 L450.9 185.1 L452.2 177.8 L453.5 178.4 L454.8 178.0 L456.1 178.7 L457.4 180.0 L458.7 177.9 L460.0 177.7 L461.3 179.1 L462.6 178.0 L463.9 179.0 L465.2 178.8 L466.5 185.7 L467.8 177.4 L469.1 177.1 L470.4 177.3 L471.7 178.1 L473.0 177.9 L474.3 178.5 L475.6 185.7 L476.9 185.6 L478.2 185.6 L479.5 179.8 L480.8 179.7 L482.1 180.6 L483.4 179.3 L484.7 179.6 L486.0 180.1 L487.3 184.0 L488.6 186.1 L489.9 186.2 L491.2 186.2 L492.5 186.3 L493.8 186.2 L495.1 186.2 L496.4 179.7 L497.7 179.7 L499.0 178.6 L500.3 180.2 L501.6 179.7 L502.9 179.1 L504.2 179.0 L505.5 180.5 L506.8 179.6 L508.1 185.4 L509.4 185.5 L510.7 180.3 L512.0 179.5 L513.3 179.3 L514.6 178.6 L515.9 179.7 L517.2 179.4 L518.5 179.6 L519.8 179.7 L521.1 178.4 L522.4 180.0 L523.7 178.2 L525.0 185.6 L526.3 185.6 L527.6 185.7 L528.9 185.5 L530.2 180.8 L531.5 179.8 L532.8 180.4 L534.1 180.7 L535.4 181.5 L536.7 181.6 L538.0 180.6 L539.3 185.4 L540.6 185.5 L541.9 185.6 L543.2 179.0 L544.5 178.3 L545.8 179.4 L547.1 179.3 L548.4 179.8 L549.7 185.9 L551.0 183.1 L552.3 183.2 L553.6 183.0 L554.9 182.5 L556.2 183.2 L557.5 182.6 L558.8 183.6 L560.1 182.9 L561.4 183.6 L562.7 186.4 L564.0 183.2 L565.3 182.6 L566.6 181.5 L567.9 181.5 L569.2 181.3 L570.5 181.5 L571.8 180.9 L573.1 179.9 L574.4 181.5 L575.7 179.9 L577.0 180.5 L578.3 186.6 L579.6 185.5 L580.9 185.3 L582.2 185.6 L583.5 185.6 L584.8 185.7 L586.1 185.5 L587.4 186.7 L588.7 182.6 L590.0 182.1 L591.3 182.3 L592.6 182.9 L593.9 182.7 L595.2 182.7 L596.5 182.2 L597.8 182.4 L599.1 186.5 L600.4 186.4 L601.7 186.4 L603.0 182.7 L604.3 182.5 L605.6 182.5 L606.9 182.6 L608.2 183.4 L609.5 182.2 L610.8 182.6 L612.1 186.3 L613.4 182.6 L614.7 181.9 L616.0 182.3 L617.3 181.8 L618.6 182.0 L619.9 182.7 L621.2 186.3 L622.5 186.4 L623.8 186.4 L625.1 183.9 L626.4 183.2 L627.7 183.0 L629.0 183.8 L630.3 183.1 L631.6 183.2 L632.9 183.8 L634.2 183.1 L635.5 183.8 L636.8 183.4 L638.1 186.4 L639.4 186.5 L640.7 186.4 L642.0 184.0 L643.3 184.1 L644.6 184.6 L645.9 185.3 L647.2 186.4 L648.5 186.3 L649.8 186.5 L651.1 186.3 L652.4 186.4 L653.7 186.7 L655.0 179.1 L656.3 177.9 L657.6 179.5 L658.9 179.4 L660.2 179.5 L661.5 185.5 L662.8 181.0 L664.1 180.5 L665.4 180.3 L666.7 180.2 L668.0 185.5 L669.3 180.6 L670.6 179.0 L671.9 178.8 L673.2 178.4 L674.5 178.4 L675.8 179.8 L677.1 178.7 L678.4 178.7 L679.7 178.9 L681.0 185.4 L682.3 185.5 L683.6 185.3 L684.9 185.4 L686.2 181.0 L687.5 180.7 L688.8 180.2 L690.1 181.2 L691.4 180.5 L692.7 180.3 L694.0 181.6 L695.3 185.4 L696.6 185.3 L697.9 185.5 L699.2 180.2 L700.5 180.6 L701.8 179.9 L703.1 181.6 L704.4 181.2 L705.7 180.5 L707.0 180.8 L708.3 181.3 L709.6 181.1 L710.9 182.6 L712.2 186.2 L713.5 186.3 L714.8 186.2 L716.1 183.7 L717.4 183.4 L718.7 183.7 L720.0 183.8 L721.3 183.5 L722.6 183.9 L723.9 183.1 L725.2 183.6 L726.5 183.5 L727.8 186.5 L729.1 182.6 L730.4 183.3 L731.7 182.7 L733.0 182.2 L734.3 183.0 L735.6 186.4 L736.9 186.6 L738.2 186.4 L739.5 185.1 L740.8 185.9 L740.8 189.1 L739.5 189.9 L738.2 188.5 L736.9 188.4 L735.6 188.5 L734.3 191.7 L733.0 192.6 L731.7 191.8 L730.4 191.7 L729.1 192.3 L727.8 188.6 L726.5 191.0 L725.2 191.0 L723.9 191.4 L722.6 191.5 L721.3 192.1 L720.0 191.7 L718.7 191.8 L717.4 191.5 L716.1 191.0 L714.8 188.9 L713.5 188.7 L712.2 188.8 L710.9 193.0 L709.6 194.8 L708.3 193.9 L707.0 194.1 L705.7 194.0 L704.4 193.6 L703.1 192.8 L701.8 195.8 L700.5 194.7 L699.2 194.4 L697.9 189.4 L696.6 189.7 L695.3 189.8 L694.0 193.4 L692.7 194.5 L691.4 195.1 L690.1 193.7 L688.8 194.0 L687.5 195.3 L686.2 194.3 L684.9 189.3 L683.6 189.8 L682.3 189.6 L681.0 189.6 L679.7 196.8 L678.4 195.9 L677.1 196.4 L675.8 195.4 L674.5 195.4 L673.2 196.5 L671.9 196.3 L670.6 196.7 L669.3 195.2 L668.0 189.4 L666.7 195.8 L665.4 195.3 L664.1 194.9 L662.8 194.4 L661.5 189.4 L660.2 195.5 L658.9 194.4 L657.6 196.5 L656.3 196.9 L655.0 197.0 L653.7 188.3 L652.4 188.6 L651.1 188.7 L649.8 188.5 L648.5 188.7 L647.2 188.6 L645.9 189.7 L644.6 190.0 L643.3 191.2 L642.0 190.8 L640.7 188.5 L639.4 188.5 L638.1 188.6 L636.8 191.2 L635.5 190.9 L634.2 191.6 L632.9 191.1 L631.6 191.4 L630.3 191.6 L629.0 191.6 L627.7 192.2 L626.4 191.4 L625.1 191.2 L623.8 188.5 L622.5 188.7 L621.2 188.7 L619.9 192.2 L618.6 192.5 L617.3 192.8 L616.0 192.9 L614.7 192.7 L613.4 192.4 L612.1 188.9 L610.8 192.8 L609.5 192.6 L608.2 191.4 L606.9 191.9 L605.6 192.0 L604.3 192.2 L603.0 191.7 L601.7 188.5 L600.4 188.8 L599.1 188.6 L597.8 192.1 L596.5 192.0 L595.2 192.3 L593.9 192.1 L592.6 192.1 L591.3 192.9 L590.0 192.9 L588.7 192.1 L587.4 188.3 L586.1 189.5 L584.8 189.3 L583.5 189.4 L582.2 189.4 L580.9 189.7 L579.6 189.5 L578.3 188.5 L577.0 195.4 L575.7 194.1 L574.4 193.5 L573.1 194.9 L571.8 194.2 L570.5 193.2 L569.2 194.1 L567.9 194.1 L566.6 193.6 L565.3 192.3 L564.0 191.6 L562.7 188.6 L561.4 191.4 L560.1 192.5 L558.8 191.3 L557.5 193.0 L556.2 191.6 L554.9 193.0 L553.6 192.3 L552.3 192.2 L551.0 191.8 L549.7 189.2 L548.4 194.2 L547.1 195.1 L545.8 195.5 L544.5 196.6 L543.2 194.9 L541.9 189.2 L540.6 189.7 L539.3 189.3 L538.0 194.5 L536.7 193.2 L535.4 193.2 L534.1 193.6 L532.8 194.0 L531.5 194.8 L530.2 194.0 L528.9 189.6 L527.6 189.1 L526.3 189.2 L525.0 189.6 L523.7 196.8 L522.4 196.1 L521.1 197.1 L519.8 195.5 L518.5 196.0 L517.2 196.3 L515.9 194.6 L514.6 197.6 L513.3 194.6 L512.0 195.1 L510.7 194.4 L509.4 189.7 L508.1 189.6 L506.8 194.6 L505.5 194.0 L504.2 195.8 L502.9 195.3 L501.6 195.7 L500.3 194.7 L499.0 197.2 L497.7 195.5 L496.4 195.8 L495.1 188.7 L493.8 188.8 L492.5 188.7 L491.2 188.8 L489.9 188.8 L488.6 188.9 L487.3 190.9 L486.0 194.4 L484.7 194.5 L483.4 195.8 L482.1 194.7 L480.8 196.3 L479.5 195.8 L478.2 189.5 L476.9 189.3 L475.6 189.5 L474.3 196.4 L473.0 197.7 L471.7 197.9 L470.4 197.3 L469.1 197.5 L467.8 197.8 L466.5 189.5 L465.2 196.5 L463.9 195.4 L462.6 197.8 L461.3 197.1 L460.0 196.1 L458.7 198.5 L457.4 195.9 L456.1 196.9 L454.8 198.4 L453.5 195.3 L452.2 198.4 L450.9 190.2 L449.6 197.6 L448.3 197.1 L447.0 195.5 L445.7 196.1 L444.4 198.0 L443.1 195.7 L441.8 196.5 L440.5 194.9 L439.2 196.0 L437.9 198.4 L436.6 197.8 L435.3 189.8 L434.0 199.9 L432.7 201.4 L431.4 198.9 L430.1 201.5 L428.8 189.8 L427.5 190.8 L426.2 200.3 L424.9 201.8 L423.6 200.8 L422.3 199.0 L421.0 195.3 L419.7 198.2 L418.4 190.4 L417.1 191.5 L415.8 204.6 L414.5 203.3 L413.2 204.8 L411.9 202.1 L410.6 200.7 L409.3 201.5 L408.0 202.9 L406.7 190.6 L405.4 191.2 L404.1 202.3 L402.8 200.4 L401.5 198.8 L400.2 196.9 L398.9 197.7 L397.6 198.4 L396.3 198.8 L395.0 199.6 L393.7 198.3 L392.4 201.0 L391.1 191.1 L389.8 203.4 L388.5 204.5 L387.2 195.9 L385.9 188.6 L384.6 188.5 L383.3 188.7 L382.0 188.7 L380.7 188.6 L379.4 188.8 L378.1 188.7 L376.8 188.7 L375.5 188.7 L374.2 189.0 L372.9 188.8 L371.6 188.8 L370.3 188.8 L369.0 189.0 L367.7 188.8 L366.4 189.1 L365.1 189.0 L363.8 189.1 L362.5 189.2 L361.2 189.2 L359.9 189.2 L358.6 189.3 L357.3 189.3 L356.0 189.2 L354.7 190.0 L353.4 188.4 L352.1 188.8 L350.8 192.3 L349.5 193.1 L348.2 192.3 L346.9 193.1 L345.6 192.6 L344.3 192.7 L343.0 193.8 L341.7 193.5 L340.4 195.3 L339.1 193.8 L337.8 189.6 L336.5 189.3 L335.2 195.4 L333.9 195.9 L332.6 196.4 L331.3 194.2 L330.0 194.4 L328.7 194.5 L327.4 194.7 L326.1 193.5 L324.8 189.8 L323.5 198.2 L322.2 195.2 L320.9 195.0 L319.6 196.1 L318.3 196.9 L317.0 195.9 L315.7 197.6 L314.4 196.2 L313.1 196.2 L311.8 189.8 L310.5 189.7 L309.2 197.8 L307.9 196.1 L306.6 198.1 L305.3 198.4 L304.0 189.9 L302.7 189.9 L301.4 197.8 L300.1 196.6 L298.8 198.7 L297.5 198.8 L296.2 198.5 L294.9 197.9 L293.6 197.3 L292.3 198.8 L291.0 198.8 L289.7 198.9 L288.4 189.9 L287.1 190.0 L285.8 198.4 L284.5 197.1 L283.2 200.1 L281.9 199.4 L280.6 198.0 L279.3 199.7 L278.0 190.6 L276.7 190.6 L275.4 190.3 L274.1 197.7 L272.8 198.5 L271.5 198.8 L270.2 200.3 L268.9 201.2 L267.6 190.4 L266.3 190.3 L265.0 203.4 L263.7 203.6 L262.4 200.6 L261.1 200.5 L259.8 204.1 L258.5 202.1 L257.2 201.3 L255.9 200.0 L254.6 190.1 L253.3 190.1 L252.0 193.8 L250.7 188.5 L249.4 188.5 L248.1 188.5 L246.8 188.4 L245.5 188.4 L244.2 188.5 L242.9 188.4 L241.6 188.5 L240.3 188.3 L239.0 188.9 L237.7 189.5 L236.4 190.1 L235.1 190.8 L233.8 188.3 L232.5 188.7 L231.2 188.7 L229.9 191.0 L228.6 191.6 L227.3 193.0 L226.0 191.5 L224.7 192.6 L223.4 192.5 L222.1 188.6 L220.8 188.6 L219.5 188.9 L218.2 193.9 L216.9 194.0 L215.6 195.4 L214.3 193.3 L213.0 194.2 L211.7 195.9 L210.4 193.6 L209.1 196.8 L207.8 189.2 L206.5 189.2 L205.2 189.6 L203.9 193.8 L202.6 195.9 L201.3 195.2 L200.0 194.0 L198.7 195.4 L197.4 196.0 L196.1 194.8 L194.8 196.1 L193.5 195.9 L192.2 196.6 L190.9 195.3 L189.6 189.5 L188.3 197.1 L187.0 198.3 L185.7 197.4 L184.4 197.0 L183.1 190.4 L181.8 199.4 L180.5 200.2 L179.2 200.2 L177.9 198.8 L176.6 197.8 L175.3 200.2 L174.0 198.4 L172.7 200.2 L171.4 200.2 L170.1 196.4 L168.8 198.7 L167.5 190.1 L166.2 189.8 L164.9 201.1 L163.6 199.0 L162.3 199.0 L161.0 199.7 L159.7 200.8 L158.4 191.3 L157.1 190.6 L155.8 201.3 L154.5 201.4 L153.2 200.7 L151.9 198.9 L150.6 197.2 L149.3 190.9 L148.0 188.8 L146.7 188.9 L145.4 189.3 L144.1 189.8 L142.8 190.2 L141.5 190.4 L140.2 191.5 L138.9 193.0 L137.6 193.7 L136.3 194.3 L135.0 193.6 L133.7 195.0 L132.4 194.5 L131.1 189.0 L129.8 189.7 L128.5 193.8 L127.2 195.1 L125.9 195.1 L124.6 195.1 L123.3 194.0 L122.0 195.7 L120.7 194.2 L119.4 195.0 L118.1 193.5 L116.8 189.5 L115.5 189.5 L114.2 197.3 L112.9 196.5 L111.6 197.3 L110.3 197.6 L109.0 196.4 L107.7 196.6 L106.4 197.8 L105.1 197.2 L103.8 195.2 L102.5 189.0 L101.2 193.8 L99.9 195.4 L98.6 196.3 L97.3 194.9 L96.0 196.5 L94.7 194.3 L93.4 194.8 L92.1 190.1 L90.8 189.9 L89.5 190.1 L88.2 188.3 L86.9 191.1 L85.6 191.9 L84.3 193.2 L83.0 192.3 L81.7 194.2 L80.4 189.3 L79.1 193.1 L77.8 194.2 L76.5 193.7 L75.2 194.0 L73.9 194.2 L72.6 196.1 L71.3 194.7 L70.0 194.5 L68.7 195.4 L67.4 195.3 L66.1 194.7 L64.8 189.6 L63.5 197.1 L62.2 199.1 L60.9 200.6 L59.6 197.6 L58.3 200.6 L57.0 199.4 L55.7 201.2 L54.4 200.1 L53.1 201.8 L51.8 197.2 L50.5 190.5 L49.2 190.1 L47.9 190.1 L46.6 197.3 L45.3 196.5 L44.0 200.5 L42.7 199.7 L41.4 190.8 L40.1 199.6 L38.8 197.8 L37.5 199.1 L36.2 198.8 L34.9 199.0 L33.6 199.4 L32.3 201.3 L31.0 202.0 L29.7 199.7 L28.4 191.4 L27.1 199.5 L25.8 201.0 L24.5 198.7 L23.2 198.5 L21.9 199.9 L20.6 190.2 L19.3 189.3 L18.0 188.4 Z" fill="#fff"/><path d="M18 179.2 H742" stroke="#d79ad8" stroke-width=".9" opacity=".8"/><path d="M739.500 182.5 V192.5" stroke="#ddd" stroke-width="1.200"/></svg>
<div class="abs" style="left:14px;top:32px;width:2px;height:180px;background:#fff"></div>
<svg class="abs" style="left:9.300px;top:30.500px" width="11" height="12" viewBox="0 0 9 12" preserveAspectRatio="none"><path d="M0 1.500 Q0 0 1.500 0 H7.500 Q9 0 9 1.500 V7 L4.500 11.500 L0 7 Z" fill="#fff"/></svg>
<!--/TL2-->
</div>
</body>
</html>
